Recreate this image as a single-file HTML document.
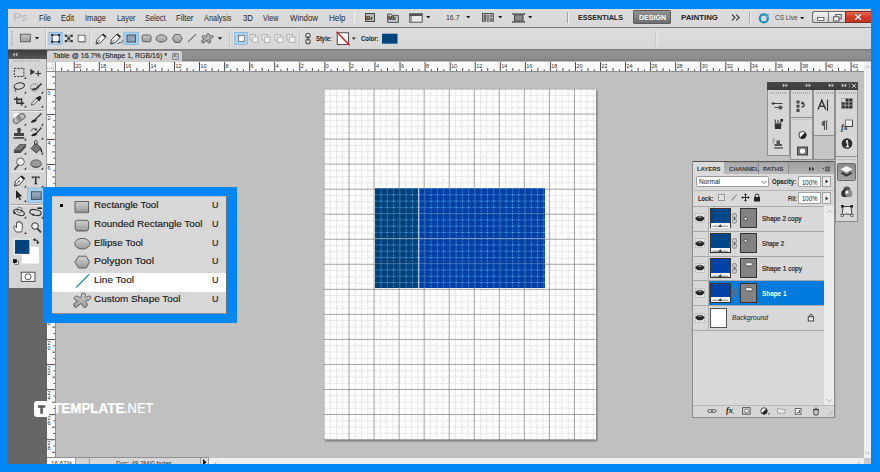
<!DOCTYPE html>
<html lang="en"><head><meta charset="utf-8"><title>Photoshop - Line Tool</title>
<style>
html,body{margin:0;padding:0;}
body{width:880px;height:472px;overflow:hidden;background:#0086f6;position:relative;font-family:"Liberation Sans",sans-serif;}
#app div{position:absolute;box-sizing:border-box;}
#app{position:absolute;left:0;top:0;width:880px;height:472px;overflow:hidden;}
.t{position:absolute;}
</style></head><body><div id="app">

<div style="left:8px;top:9px;width:863px;height:455px;background:#c0c0c0;"></div>
<div style="left:8px;top:9px;width:863px;height:19px;background:linear-gradient(#dcdcdc,#d8d8d8);"></div>
<div style="left:8px;top:26.8px;width:863px;height:1px;background:#7c7c7c;"></div>
<div class="t" style="left:12.5px;top:10.91px;font-size:11.5px;line-height:13.22px;color:#b4b4b4;white-space:nowrap;transform:scaleX(1.0804);transform-origin:0 0;">Ps</div>
<div class="t" style="left:38.5px;top:12.59px;font-size:8.8px;line-height:10.12px;color:#262626;white-space:nowrap;transform:scaleX(0.8463);transform-origin:0 0;">File</div>
<div class="t" style="left:61px;top:12.59px;font-size:8.8px;line-height:10.12px;color:#262626;white-space:nowrap;transform:scaleX(0.8573);transform-origin:0 0;">Edit</div>
<div class="t" style="left:84.5px;top:12.59px;font-size:8.8px;line-height:10.12px;color:#262626;white-space:nowrap;transform:scaleX(0.8587);transform-origin:0 0;">Image</div>
<div class="t" style="left:116.5px;top:12.59px;font-size:8.8px;line-height:10.12px;color:#262626;white-space:nowrap;transform:scaleX(0.8405);transform-origin:0 0;">Layer</div>
<div class="t" style="left:145px;top:12.59px;font-size:8.8px;line-height:10.12px;color:#262626;white-space:nowrap;transform:scaleX(0.8382);transform-origin:0 0;">Select</div>
<div class="t" style="left:176px;top:12.59px;font-size:8.8px;line-height:10.12px;color:#262626;white-space:nowrap;transform:scaleX(0.8950);transform-origin:0 0;">Filter</div>
<div class="t" style="left:204px;top:12.59px;font-size:8.8px;line-height:10.12px;color:#262626;white-space:nowrap;transform:scaleX(0.8392);transform-origin:0 0;">Analysis</div>
<div class="t" style="left:242.5px;top:12.59px;font-size:8.8px;line-height:10.12px;color:#262626;white-space:nowrap;transform:scaleX(0.8890);transform-origin:0 0;">3D</div>
<div class="t" style="left:263px;top:12.59px;font-size:8.8px;line-height:10.12px;color:#262626;white-space:nowrap;transform:scaleX(0.8195);transform-origin:0 0;">View</div>
<div class="t" style="left:290px;top:12.59px;font-size:8.8px;line-height:10.12px;color:#262626;white-space:nowrap;transform:scaleX(0.8946);transform-origin:0 0;">Window</div>
<div class="t" style="left:329px;top:12.59px;font-size:8.8px;line-height:10.12px;color:#262626;white-space:nowrap;transform:scaleX(0.9117);transform-origin:0 0;">Help</div>
<div style="left:8px;top:28px;width:863px;height:21px;background:linear-gradient(#dddddd,#d6d6d6);"></div>
<div style="left:8px;top:48.5px;width:863px;height:1px;background:#8a8a8a;"></div>
<div style="left:8px;top:49.3px;width:863px;height:12.2px;background:linear-gradient(#787878 0,#929292 22%,#8c8c8c 82%,#7a7a7a 100%);"></div>
<div style="left:46.5px;top:50.5px;width:135.5px;height:11px;background:linear-gradient(#d6d6d6,#cdcdcd);border-radius:2px 2px 0 0;"></div>
<div class="t" style="left:52.5px;top:52.00px;font-size:7.6px;line-height:8.74px;color:#262626;white-space:nowrap;transform:scaleX(0.9233);transform-origin:0 0;-webkit-text-stroke:0.15px #262626;">Table @ 16.7% (Shape 1, RGB/16) *</div>
<div style="left:171.5px;top:52.5px;width:7.5px;height:7px;background:#c4c4c4;border:0.7px solid #888;border-radius:1px;"></div>
<div class="t" style="left:173px;top:52.15px;font-size:7px;line-height:8.05px;color:#555;white-space:nowrap;">×</div>
<div style="left:46.5px;top:61.5px;width:818px;height:9.5px;background:#fafafa;"></div>
<div style="left:46.5px;top:61.5px;width:8.7px;height:396px;background:#fafafa;"></div>
<div style="left:46.5px;top:70.5px;width:818px;height:0.8px;background:#8e8e8e;"></div>
<div style="left:54.9px;top:61.5px;width:0.8px;height:396px;background:#8e8e8e;"></div>
<svg style="position:absolute;left:46.5px;top:61.5px;" width="818" height="9.5" viewBox="0 0 818 9.5"><rect x="14.27" y="6.00" width="0.9" height="3.5" fill="#3a3a3a"/><rect x="20.54" y="7.30" width="0.9" height="2.2" fill="#3a3a3a"/><rect x="26.80" y="0.00" width="0.9" height="9.5" fill="#3a3a3a"/><text x="28.20" y="5.6" font-size="5.4" fill="#333" font-family="Liberation Sans, sans-serif">20</text><rect x="33.07" y="7.30" width="0.9" height="2.2" fill="#3a3a3a"/><rect x="39.33" y="6.00" width="0.9" height="3.5" fill="#3a3a3a"/><rect x="45.60" y="7.30" width="0.9" height="2.2" fill="#3a3a3a"/><rect x="51.86" y="0.00" width="0.9" height="9.5" fill="#3a3a3a"/><text x="53.26" y="5.6" font-size="5.4" fill="#333" font-family="Liberation Sans, sans-serif">18</text><rect x="58.13" y="7.30" width="0.9" height="2.2" fill="#3a3a3a"/><rect x="64.39" y="6.00" width="0.9" height="3.5" fill="#3a3a3a"/><rect x="70.66" y="7.30" width="0.9" height="2.2" fill="#3a3a3a"/><rect x="76.92" y="0.00" width="0.9" height="9.5" fill="#3a3a3a"/><text x="78.32" y="5.6" font-size="5.4" fill="#333" font-family="Liberation Sans, sans-serif">16</text><rect x="83.19" y="7.30" width="0.9" height="2.2" fill="#3a3a3a"/><rect x="89.45" y="6.00" width="0.9" height="3.5" fill="#3a3a3a"/><rect x="95.72" y="7.30" width="0.9" height="2.2" fill="#3a3a3a"/><rect x="101.98" y="0.00" width="0.9" height="9.5" fill="#3a3a3a"/><text x="103.38" y="5.6" font-size="5.4" fill="#333" font-family="Liberation Sans, sans-serif">14</text><rect x="108.25" y="7.30" width="0.9" height="2.2" fill="#3a3a3a"/><rect x="114.51" y="6.00" width="0.9" height="3.5" fill="#3a3a3a"/><rect x="120.78" y="7.30" width="0.9" height="2.2" fill="#3a3a3a"/><rect x="127.04" y="0.00" width="0.9" height="9.5" fill="#3a3a3a"/><text x="128.44" y="5.6" font-size="5.4" fill="#333" font-family="Liberation Sans, sans-serif">12</text><rect x="133.31" y="7.30" width="0.9" height="2.2" fill="#3a3a3a"/><rect x="139.57" y="6.00" width="0.9" height="3.5" fill="#3a3a3a"/><rect x="145.84" y="7.30" width="0.9" height="2.2" fill="#3a3a3a"/><rect x="152.10" y="0.00" width="0.9" height="9.5" fill="#3a3a3a"/><text x="153.50" y="5.6" font-size="5.4" fill="#333" font-family="Liberation Sans, sans-serif">10</text><rect x="158.37" y="7.30" width="0.9" height="2.2" fill="#3a3a3a"/><rect x="164.63" y="6.00" width="0.9" height="3.5" fill="#3a3a3a"/><rect x="170.90" y="7.30" width="0.9" height="2.2" fill="#3a3a3a"/><rect x="177.16" y="0.00" width="0.9" height="9.5" fill="#3a3a3a"/><text x="178.56" y="5.6" font-size="5.4" fill="#333" font-family="Liberation Sans, sans-serif">8</text><rect x="183.43" y="7.30" width="0.9" height="2.2" fill="#3a3a3a"/><rect x="189.69" y="6.00" width="0.9" height="3.5" fill="#3a3a3a"/><rect x="195.96" y="7.30" width="0.9" height="2.2" fill="#3a3a3a"/><rect x="202.22" y="0.00" width="0.9" height="9.5" fill="#3a3a3a"/><text x="203.62" y="5.6" font-size="5.4" fill="#333" font-family="Liberation Sans, sans-serif">6</text><rect x="208.49" y="7.30" width="0.9" height="2.2" fill="#3a3a3a"/><rect x="214.75" y="6.00" width="0.9" height="3.5" fill="#3a3a3a"/><rect x="221.02" y="7.30" width="0.9" height="2.2" fill="#3a3a3a"/><rect x="227.28" y="0.00" width="0.9" height="9.5" fill="#3a3a3a"/><text x="228.68" y="5.6" font-size="5.4" fill="#333" font-family="Liberation Sans, sans-serif">4</text><rect x="233.54" y="7.30" width="0.9" height="2.2" fill="#3a3a3a"/><rect x="239.81" y="6.00" width="0.9" height="3.5" fill="#3a3a3a"/><rect x="246.08" y="7.30" width="0.9" height="2.2" fill="#3a3a3a"/><rect x="252.34" y="0.00" width="0.9" height="9.5" fill="#3a3a3a"/><text x="253.74" y="5.6" font-size="5.4" fill="#333" font-family="Liberation Sans, sans-serif">2</text><rect x="258.61" y="7.30" width="0.9" height="2.2" fill="#3a3a3a"/><rect x="264.87" y="6.00" width="0.9" height="3.5" fill="#3a3a3a"/><rect x="271.14" y="7.30" width="0.9" height="2.2" fill="#3a3a3a"/><rect x="277.40" y="0.00" width="0.9" height="9.5" fill="#3a3a3a"/><text x="278.80" y="5.6" font-size="5.4" fill="#333" font-family="Liberation Sans, sans-serif">0</text><rect x="283.67" y="7.30" width="0.9" height="2.2" fill="#3a3a3a"/><rect x="289.93" y="6.00" width="0.9" height="3.5" fill="#3a3a3a"/><rect x="296.20" y="7.30" width="0.9" height="2.2" fill="#3a3a3a"/><rect x="302.46" y="0.00" width="0.9" height="9.5" fill="#3a3a3a"/><text x="303.86" y="5.6" font-size="5.4" fill="#333" font-family="Liberation Sans, sans-serif">2</text><rect x="308.73" y="7.30" width="0.9" height="2.2" fill="#3a3a3a"/><rect x="314.99" y="6.00" width="0.9" height="3.5" fill="#3a3a3a"/><rect x="321.26" y="7.30" width="0.9" height="2.2" fill="#3a3a3a"/><rect x="327.52" y="0.00" width="0.9" height="9.5" fill="#3a3a3a"/><text x="328.92" y="5.6" font-size="5.4" fill="#333" font-family="Liberation Sans, sans-serif">4</text><rect x="333.79" y="7.30" width="0.9" height="2.2" fill="#3a3a3a"/><rect x="340.05" y="6.00" width="0.9" height="3.5" fill="#3a3a3a"/><rect x="346.32" y="7.30" width="0.9" height="2.2" fill="#3a3a3a"/><rect x="352.58" y="0.00" width="0.9" height="9.5" fill="#3a3a3a"/><text x="353.98" y="5.6" font-size="5.4" fill="#333" font-family="Liberation Sans, sans-serif">6</text><rect x="358.85" y="7.30" width="0.9" height="2.2" fill="#3a3a3a"/><rect x="365.11" y="6.00" width="0.9" height="3.5" fill="#3a3a3a"/><rect x="371.38" y="7.30" width="0.9" height="2.2" fill="#3a3a3a"/><rect x="377.64" y="0.00" width="0.9" height="9.5" fill="#3a3a3a"/><text x="379.04" y="5.6" font-size="5.4" fill="#333" font-family="Liberation Sans, sans-serif">8</text><rect x="383.91" y="7.30" width="0.9" height="2.2" fill="#3a3a3a"/><rect x="390.17" y="6.00" width="0.9" height="3.5" fill="#3a3a3a"/><rect x="396.44" y="7.30" width="0.9" height="2.2" fill="#3a3a3a"/><rect x="402.70" y="0.00" width="0.9" height="9.5" fill="#3a3a3a"/><text x="404.10" y="5.6" font-size="5.4" fill="#333" font-family="Liberation Sans, sans-serif">10</text><rect x="408.97" y="7.30" width="0.9" height="2.2" fill="#3a3a3a"/><rect x="415.23" y="6.00" width="0.9" height="3.5" fill="#3a3a3a"/><rect x="421.50" y="7.30" width="0.9" height="2.2" fill="#3a3a3a"/><rect x="427.76" y="0.00" width="0.9" height="9.5" fill="#3a3a3a"/><text x="429.16" y="5.6" font-size="5.4" fill="#333" font-family="Liberation Sans, sans-serif">12</text><rect x="434.03" y="7.30" width="0.9" height="2.2" fill="#3a3a3a"/><rect x="440.29" y="6.00" width="0.9" height="3.5" fill="#3a3a3a"/><rect x="446.56" y="7.30" width="0.9" height="2.2" fill="#3a3a3a"/><rect x="452.82" y="0.00" width="0.9" height="9.5" fill="#3a3a3a"/><text x="454.22" y="5.6" font-size="5.4" fill="#333" font-family="Liberation Sans, sans-serif">14</text><rect x="459.09" y="7.30" width="0.9" height="2.2" fill="#3a3a3a"/><rect x="465.35" y="6.00" width="0.9" height="3.5" fill="#3a3a3a"/><rect x="471.62" y="7.30" width="0.9" height="2.2" fill="#3a3a3a"/><rect x="477.88" y="0.00" width="0.9" height="9.5" fill="#3a3a3a"/><text x="479.28" y="5.6" font-size="5.4" fill="#333" font-family="Liberation Sans, sans-serif">16</text><rect x="484.14" y="7.30" width="0.9" height="2.2" fill="#3a3a3a"/><rect x="490.41" y="6.00" width="0.9" height="3.5" fill="#3a3a3a"/><rect x="496.68" y="7.30" width="0.9" height="2.2" fill="#3a3a3a"/><rect x="502.94" y="0.00" width="0.9" height="9.5" fill="#3a3a3a"/><text x="504.34" y="5.6" font-size="5.4" fill="#333" font-family="Liberation Sans, sans-serif">18</text><rect x="509.21" y="7.30" width="0.9" height="2.2" fill="#3a3a3a"/><rect x="515.47" y="6.00" width="0.9" height="3.5" fill="#3a3a3a"/><rect x="521.74" y="7.30" width="0.9" height="2.2" fill="#3a3a3a"/><rect x="528.00" y="0.00" width="0.9" height="9.5" fill="#3a3a3a"/><text x="529.40" y="5.6" font-size="5.4" fill="#333" font-family="Liberation Sans, sans-serif">20</text><rect x="534.26" y="7.30" width="0.9" height="2.2" fill="#3a3a3a"/><rect x="540.53" y="6.00" width="0.9" height="3.5" fill="#3a3a3a"/><rect x="546.79" y="7.30" width="0.9" height="2.2" fill="#3a3a3a"/><rect x="553.06" y="0.00" width="0.9" height="9.5" fill="#3a3a3a"/><text x="554.46" y="5.6" font-size="5.4" fill="#333" font-family="Liberation Sans, sans-serif">22</text><rect x="559.33" y="7.30" width="0.9" height="2.2" fill="#3a3a3a"/><rect x="565.59" y="6.00" width="0.9" height="3.5" fill="#3a3a3a"/><rect x="571.86" y="7.30" width="0.9" height="2.2" fill="#3a3a3a"/><rect x="578.12" y="0.00" width="0.9" height="9.5" fill="#3a3a3a"/><text x="579.52" y="5.6" font-size="5.4" fill="#333" font-family="Liberation Sans, sans-serif">24</text><rect x="584.38" y="7.30" width="0.9" height="2.2" fill="#3a3a3a"/><rect x="590.65" y="6.00" width="0.9" height="3.5" fill="#3a3a3a"/><rect x="596.92" y="7.30" width="0.9" height="2.2" fill="#3a3a3a"/><rect x="603.18" y="0.00" width="0.9" height="9.5" fill="#3a3a3a"/><text x="604.58" y="5.6" font-size="5.4" fill="#333" font-family="Liberation Sans, sans-serif">26</text><rect x="609.45" y="7.30" width="0.9" height="2.2" fill="#3a3a3a"/><rect x="615.71" y="6.00" width="0.9" height="3.5" fill="#3a3a3a"/><rect x="621.98" y="7.30" width="0.9" height="2.2" fill="#3a3a3a"/><rect x="628.24" y="0.00" width="0.9" height="9.5" fill="#3a3a3a"/><text x="629.64" y="5.6" font-size="5.4" fill="#333" font-family="Liberation Sans, sans-serif">28</text><rect x="634.50" y="7.30" width="0.9" height="2.2" fill="#3a3a3a"/><rect x="640.77" y="6.00" width="0.9" height="3.5" fill="#3a3a3a"/><rect x="647.03" y="7.30" width="0.9" height="2.2" fill="#3a3a3a"/><rect x="653.30" y="0.00" width="0.9" height="9.5" fill="#3a3a3a"/><text x="654.70" y="5.6" font-size="5.4" fill="#333" font-family="Liberation Sans, sans-serif">30</text><rect x="659.56" y="7.30" width="0.9" height="2.2" fill="#3a3a3a"/><rect x="665.83" y="6.00" width="0.9" height="3.5" fill="#3a3a3a"/><rect x="672.10" y="7.30" width="0.9" height="2.2" fill="#3a3a3a"/><rect x="678.36" y="0.00" width="0.9" height="9.5" fill="#3a3a3a"/><text x="679.76" y="5.6" font-size="5.4" fill="#333" font-family="Liberation Sans, sans-serif">32</text><rect x="684.62" y="7.30" width="0.9" height="2.2" fill="#3a3a3a"/><rect x="690.89" y="6.00" width="0.9" height="3.5" fill="#3a3a3a"/><rect x="697.16" y="7.30" width="0.9" height="2.2" fill="#3a3a3a"/><rect x="703.42" y="0.00" width="0.9" height="9.5" fill="#3a3a3a"/><text x="704.82" y="5.6" font-size="5.4" fill="#333" font-family="Liberation Sans, sans-serif">34</text><rect x="709.69" y="7.30" width="0.9" height="2.2" fill="#3a3a3a"/><rect x="715.95" y="6.00" width="0.9" height="3.5" fill="#3a3a3a"/><rect x="722.22" y="7.30" width="0.9" height="2.2" fill="#3a3a3a"/><rect x="728.48" y="0.00" width="0.9" height="9.5" fill="#3a3a3a"/><text x="729.88" y="5.6" font-size="5.4" fill="#333" font-family="Liberation Sans, sans-serif">36</text><rect x="734.75" y="7.30" width="0.9" height="2.2" fill="#3a3a3a"/><rect x="741.01" y="6.00" width="0.9" height="3.5" fill="#3a3a3a"/><rect x="747.27" y="7.30" width="0.9" height="2.2" fill="#3a3a3a"/><rect x="753.54" y="0.00" width="0.9" height="9.5" fill="#3a3a3a"/><text x="754.94" y="5.6" font-size="5.4" fill="#333" font-family="Liberation Sans, sans-serif">38</text><rect x="759.80" y="7.30" width="0.9" height="2.2" fill="#3a3a3a"/><rect x="766.07" y="6.00" width="0.9" height="3.5" fill="#3a3a3a"/><rect x="772.34" y="7.30" width="0.9" height="2.2" fill="#3a3a3a"/><rect x="778.60" y="0.00" width="0.9" height="9.5" fill="#3a3a3a"/><text x="780.00" y="5.6" font-size="5.4" fill="#333" font-family="Liberation Sans, sans-serif">40</text><rect x="784.87" y="7.30" width="0.9" height="2.2" fill="#3a3a3a"/><rect x="791.13" y="6.00" width="0.9" height="3.5" fill="#3a3a3a"/><rect x="797.40" y="7.30" width="0.9" height="2.2" fill="#3a3a3a"/><rect x="803.66" y="0.00" width="0.9" height="9.5" fill="#3a3a3a"/><text x="805.06" y="5.6" font-size="5.4" fill="#333" font-family="Liberation Sans, sans-serif">42</text><rect x="809.93" y="7.30" width="0.9" height="2.2" fill="#3a3a3a"/></svg>
<svg style="position:absolute;left:46.5px;top:61.5px;" width="8.7" height="396" viewBox="0 0 8.7 396"><rect x="5.20" y="14.17" width="3.5" height="0.9" fill="#3a3a3a"/><rect x="6.50" y="20.43" width="2.2" height="0.9" fill="#3a3a3a"/><rect x="0.00" y="26.70" width="8.7" height="0.9" fill="#3a3a3a"/><text x="0.6" y="32.70" font-size="5.4" fill="#333" font-family="Liberation Sans, sans-serif">0</text><rect x="6.50" y="32.96" width="2.2" height="0.9" fill="#3a3a3a"/><rect x="5.20" y="39.23" width="3.5" height="0.9" fill="#3a3a3a"/><rect x="6.50" y="45.49" width="2.2" height="0.9" fill="#3a3a3a"/><rect x="0.00" y="51.76" width="8.7" height="0.9" fill="#3a3a3a"/><text x="0.6" y="57.76" font-size="5.4" fill="#333" font-family="Liberation Sans, sans-serif">2</text><rect x="6.50" y="58.02" width="2.2" height="0.9" fill="#3a3a3a"/><rect x="5.20" y="64.29" width="3.5" height="0.9" fill="#3a3a3a"/><rect x="6.50" y="70.55" width="2.2" height="0.9" fill="#3a3a3a"/><rect x="0.00" y="76.82" width="8.7" height="0.9" fill="#3a3a3a"/><text x="0.6" y="82.82" font-size="5.4" fill="#333" font-family="Liberation Sans, sans-serif">4</text><rect x="6.50" y="83.08" width="2.2" height="0.9" fill="#3a3a3a"/><rect x="5.20" y="89.35" width="3.5" height="0.9" fill="#3a3a3a"/><rect x="6.50" y="95.61" width="2.2" height="0.9" fill="#3a3a3a"/><rect x="0.00" y="101.88" width="8.7" height="0.9" fill="#3a3a3a"/><text x="0.6" y="107.88" font-size="5.4" fill="#333" font-family="Liberation Sans, sans-serif">6</text><rect x="6.50" y="108.14" width="2.2" height="0.9" fill="#3a3a3a"/><rect x="5.20" y="114.41" width="3.5" height="0.9" fill="#3a3a3a"/><rect x="6.50" y="120.67" width="2.2" height="0.9" fill="#3a3a3a"/><rect x="0.00" y="126.94" width="8.7" height="0.9" fill="#3a3a3a"/><text x="0.6" y="132.94" font-size="5.4" fill="#333" font-family="Liberation Sans, sans-serif">8</text><rect x="6.50" y="133.20" width="2.2" height="0.9" fill="#3a3a3a"/><rect x="5.20" y="139.47" width="3.5" height="0.9" fill="#3a3a3a"/><rect x="6.50" y="145.73" width="2.2" height="0.9" fill="#3a3a3a"/><rect x="0.00" y="152.00" width="8.7" height="0.9" fill="#3a3a3a"/><text x="0.6" y="158.00" font-size="5.4" fill="#333" font-family="Liberation Sans, sans-serif">1</text><text x="0.6" y="162.60" font-size="5.4" fill="#333" font-family="Liberation Sans, sans-serif">0</text><rect x="6.50" y="158.26" width="2.2" height="0.9" fill="#3a3a3a"/><rect x="5.20" y="164.53" width="3.5" height="0.9" fill="#3a3a3a"/><rect x="6.50" y="170.79" width="2.2" height="0.9" fill="#3a3a3a"/><rect x="0.00" y="177.06" width="8.7" height="0.9" fill="#3a3a3a"/><text x="0.6" y="183.06" font-size="5.4" fill="#333" font-family="Liberation Sans, sans-serif">1</text><text x="0.6" y="187.66" font-size="5.4" fill="#333" font-family="Liberation Sans, sans-serif">2</text><rect x="6.50" y="183.32" width="2.2" height="0.9" fill="#3a3a3a"/><rect x="5.20" y="189.59" width="3.5" height="0.9" fill="#3a3a3a"/><rect x="6.50" y="195.85" width="2.2" height="0.9" fill="#3a3a3a"/><rect x="0.00" y="202.12" width="8.7" height="0.9" fill="#3a3a3a"/><text x="0.6" y="208.12" font-size="5.4" fill="#333" font-family="Liberation Sans, sans-serif">1</text><text x="0.6" y="212.72" font-size="5.4" fill="#333" font-family="Liberation Sans, sans-serif">4</text><rect x="6.50" y="208.38" width="2.2" height="0.9" fill="#3a3a3a"/><rect x="5.20" y="214.65" width="3.5" height="0.9" fill="#3a3a3a"/><rect x="6.50" y="220.91" width="2.2" height="0.9" fill="#3a3a3a"/><rect x="0.00" y="227.18" width="8.7" height="0.9" fill="#3a3a3a"/><text x="0.6" y="233.18" font-size="5.4" fill="#333" font-family="Liberation Sans, sans-serif">1</text><text x="0.6" y="237.78" font-size="5.4" fill="#333" font-family="Liberation Sans, sans-serif">6</text><rect x="6.50" y="233.44" width="2.2" height="0.9" fill="#3a3a3a"/><rect x="5.20" y="239.71" width="3.5" height="0.9" fill="#3a3a3a"/><rect x="6.50" y="245.97" width="2.2" height="0.9" fill="#3a3a3a"/><rect x="0.00" y="252.24" width="8.7" height="0.9" fill="#3a3a3a"/><text x="0.6" y="258.24" font-size="5.4" fill="#333" font-family="Liberation Sans, sans-serif">1</text><text x="0.6" y="262.84" font-size="5.4" fill="#333" font-family="Liberation Sans, sans-serif">8</text><rect x="6.50" y="258.50" width="2.2" height="0.9" fill="#3a3a3a"/><rect x="5.20" y="264.77" width="3.5" height="0.9" fill="#3a3a3a"/><rect x="6.50" y="271.03" width="2.2" height="0.9" fill="#3a3a3a"/><rect x="0.00" y="277.30" width="8.7" height="0.9" fill="#3a3a3a"/><text x="0.6" y="283.30" font-size="5.4" fill="#333" font-family="Liberation Sans, sans-serif">2</text><text x="0.6" y="287.90" font-size="5.4" fill="#333" font-family="Liberation Sans, sans-serif">0</text><rect x="6.50" y="283.57" width="2.2" height="0.9" fill="#3a3a3a"/><rect x="5.20" y="289.83" width="3.5" height="0.9" fill="#3a3a3a"/><rect x="6.50" y="296.10" width="2.2" height="0.9" fill="#3a3a3a"/><rect x="0.00" y="302.36" width="8.7" height="0.9" fill="#3a3a3a"/><text x="0.6" y="308.36" font-size="5.4" fill="#333" font-family="Liberation Sans, sans-serif">2</text><text x="0.6" y="312.96" font-size="5.4" fill="#333" font-family="Liberation Sans, sans-serif">2</text><rect x="6.50" y="308.62" width="2.2" height="0.9" fill="#3a3a3a"/><rect x="5.20" y="314.89" width="3.5" height="0.9" fill="#3a3a3a"/><rect x="6.50" y="321.15" width="2.2" height="0.9" fill="#3a3a3a"/><rect x="0.00" y="327.42" width="8.7" height="0.9" fill="#3a3a3a"/><text x="0.6" y="333.42" font-size="5.4" fill="#333" font-family="Liberation Sans, sans-serif">2</text><text x="0.6" y="338.02" font-size="5.4" fill="#333" font-family="Liberation Sans, sans-serif">4</text><rect x="6.50" y="333.68" width="2.2" height="0.9" fill="#3a3a3a"/><rect x="5.20" y="339.95" width="3.5" height="0.9" fill="#3a3a3a"/><rect x="6.50" y="346.22" width="2.2" height="0.9" fill="#3a3a3a"/><rect x="0.00" y="352.48" width="8.7" height="0.9" fill="#3a3a3a"/><text x="0.6" y="358.48" font-size="5.4" fill="#333" font-family="Liberation Sans, sans-serif">2</text><text x="0.6" y="363.08" font-size="5.4" fill="#333" font-family="Liberation Sans, sans-serif">6</text><rect x="6.50" y="358.75" width="2.2" height="0.9" fill="#3a3a3a"/><rect x="5.20" y="365.01" width="3.5" height="0.9" fill="#3a3a3a"/><rect x="6.50" y="371.27" width="2.2" height="0.9" fill="#3a3a3a"/><rect x="0.00" y="377.54" width="8.7" height="0.9" fill="#3a3a3a"/><text x="0.6" y="383.54" font-size="5.4" fill="#333" font-family="Liberation Sans, sans-serif">2</text><text x="0.6" y="388.14" font-size="5.4" fill="#333" font-family="Liberation Sans, sans-serif">8</text><rect x="6.50" y="383.80" width="2.2" height="0.9" fill="#3a3a3a"/><rect x="5.20" y="390.07" width="3.5" height="0.9" fill="#3a3a3a"/></svg>
<div style="left:46.5px;top:61.5px;width:8.7px;height:9.3px;background:#f4f4f4;"></div>
<svg style="position:absolute;left:46.5px;top:61.5px;" width="8.7" height="9.3" viewBox="0 0 8.7 9.3"><path d="M6 0V9.3M0 6.3H8.7" stroke="#888" stroke-width="0.6" stroke-dasharray="1 1" fill="none"/></svg>
<div style="left:324.3px;top:88.6px;width:271.49999999999994px;height:351.0px;background:#ffffff;box-shadow:1px 1px 2px rgba(0,0,0,0.45);"></div>
<svg style="position:absolute;left:324.3px;top:88.6px;" width="271.5" height="351.0" viewBox="0 0 271.5 351.0"><path d="M6.26 0V351.00M12.52 0V351.00M18.78 0V351.00M31.30 0V351.00M37.56 0V351.00M43.82 0V351.00M56.34 0V351.00M62.60 0V351.00M68.86 0V351.00M81.38 0V351.00M87.64 0V351.00M93.90 0V351.00M106.42 0V351.00M112.68 0V351.00M118.94 0V351.00M131.46 0V351.00M137.72 0V351.00M143.98 0V351.00M156.50 0V351.00M162.76 0V351.00M169.02 0V351.00M181.54 0V351.00M187.80 0V351.00M194.06 0V351.00M206.58 0V351.00M212.84 0V351.00M219.10 0V351.00M231.62 0V351.00M237.88 0V351.00M244.14 0V351.00M256.66 0V351.00M262.92 0V351.00M269.18 0V351.00M0 6.26H271.50M0 12.52H271.50M0 18.78H271.50M0 31.30H271.50M0 37.56H271.50M0 43.82H271.50M0 56.34H271.50M0 62.60H271.50M0 68.86H271.50M0 81.38H271.50M0 87.64H271.50M0 93.90H271.50M0 106.42H271.50M0 112.68H271.50M0 118.94H271.50M0 131.46H271.50M0 137.72H271.50M0 143.98H271.50M0 156.50H271.50M0 162.76H271.50M0 169.02H271.50M0 181.54H271.50M0 187.80H271.50M0 194.06H271.50M0 206.58H271.50M0 212.84H271.50M0 219.10H271.50M0 231.62H271.50M0 237.88H271.50M0 244.14H271.50M0 256.66H271.50M0 262.92H271.50M0 269.18H271.50M0 281.70H271.50M0 287.96H271.50M0 294.22H271.50M0 306.74H271.50M0 313.00H271.50M0 319.26H271.50M0 331.78H271.50M0 338.04H271.50M0 344.30H271.50" stroke="#a8a8a8" stroke-opacity="0.42" stroke-width="0.8" stroke-dasharray="2.3 0.83" fill="none"/><path d="M0.00 0V351.00M25.04 0V351.00M50.08 0V351.00M75.12 0V351.00M100.16 0V351.00M125.20 0V351.00M150.24 0V351.00M175.28 0V351.00M200.32 0V351.00M225.36 0V351.00M250.40 0V351.00M0 0.00H271.50M0 25.04H271.50M0 50.08H271.50M0 75.12H271.50M0 100.16H271.50M0 125.20H271.50M0 150.24H271.50M0 175.28H271.50M0 200.32H271.50M0 225.36H271.50M0 250.40H271.50M0 275.44H271.50M0 300.48H271.50M0 325.52H271.50M0 350.56H271.50" stroke="#767676" stroke-opacity="0.8" stroke-width="0.85" fill="none"/></svg>
<div style="left:374.6px;top:188.2px;width:43.89999999999998px;height:100.19999999999999px;background:#004179;"></div>
<div style="left:418.5px;top:188.2px;width:126.10000000000002px;height:100.19999999999999px;background:#003fa6;"></div>
<svg style="position:absolute;left:374.6px;top:188.2px;" width="170.0" height="100.2" viewBox="0 0 170.0 100.2"><path d="M6.04 0V100.20M12.30 0V100.20M18.56 0V100.20M31.08 0V100.20M37.34 0V100.20M43.60 0V100.20M56.12 0V100.20M62.38 0V100.20M68.64 0V100.20M81.16 0V100.20M87.42 0V100.20M93.68 0V100.20M106.20 0V100.20M112.46 0V100.20M118.72 0V100.20M131.24 0V100.20M137.50 0V100.20M143.76 0V100.20M156.28 0V100.20M162.54 0V100.20M168.80 0V100.20M0 6.82H170.00M0 13.08H170.00M0 19.34H170.00M0 31.86H170.00M0 38.12H170.00M0 44.38H170.00M0 56.90H170.00M0 63.16H170.00M0 69.42H170.00M0 81.94H170.00M0 88.20H170.00M0 94.46H170.00" stroke="#3f9be6" stroke-opacity="0.72" stroke-width="0.9" stroke-dasharray="2.3 0.83" fill="none"/><path d="M24.82 0V100.20M49.86 0V100.20M74.90 0V100.20M99.94 0V100.20M124.98 0V100.20M150.02 0V100.20M0 0.56H170.00M0 25.60H170.00M0 50.64H170.00M0 75.68H170.00" stroke="#8aa3bd" stroke-opacity="0.62" stroke-width="0.8" fill="none"/><g fill="#cfe4f6" fill-opacity="0.38"><rect x="5.44" y="6.22" width="1.2" height="1.2"/><rect x="5.44" y="12.48" width="1.2" height="1.2"/><rect x="5.44" y="18.74" width="1.2" height="1.2"/><rect x="5.44" y="31.26" width="1.2" height="1.2"/><rect x="5.44" y="37.52" width="1.2" height="1.2"/><rect x="5.44" y="43.78" width="1.2" height="1.2"/><rect x="5.44" y="56.30" width="1.2" height="1.2"/><rect x="5.44" y="62.56" width="1.2" height="1.2"/><rect x="5.44" y="68.82" width="1.2" height="1.2"/><rect x="5.44" y="81.34" width="1.2" height="1.2"/><rect x="5.44" y="87.60" width="1.2" height="1.2"/><rect x="5.44" y="93.86" width="1.2" height="1.2"/><rect x="11.70" y="6.22" width="1.2" height="1.2"/><rect x="11.70" y="12.48" width="1.2" height="1.2"/><rect x="11.70" y="18.74" width="1.2" height="1.2"/><rect x="11.70" y="31.26" width="1.2" height="1.2"/><rect x="11.70" y="37.52" width="1.2" height="1.2"/><rect x="11.70" y="43.78" width="1.2" height="1.2"/><rect x="11.70" y="56.30" width="1.2" height="1.2"/><rect x="11.70" y="62.56" width="1.2" height="1.2"/><rect x="11.70" y="68.82" width="1.2" height="1.2"/><rect x="11.70" y="81.34" width="1.2" height="1.2"/><rect x="11.70" y="87.60" width="1.2" height="1.2"/><rect x="11.70" y="93.86" width="1.2" height="1.2"/><rect x="17.96" y="6.22" width="1.2" height="1.2"/><rect x="17.96" y="12.48" width="1.2" height="1.2"/><rect x="17.96" y="18.74" width="1.2" height="1.2"/><rect x="17.96" y="31.26" width="1.2" height="1.2"/><rect x="17.96" y="37.52" width="1.2" height="1.2"/><rect x="17.96" y="43.78" width="1.2" height="1.2"/><rect x="17.96" y="56.30" width="1.2" height="1.2"/><rect x="17.96" y="62.56" width="1.2" height="1.2"/><rect x="17.96" y="68.82" width="1.2" height="1.2"/><rect x="17.96" y="81.34" width="1.2" height="1.2"/><rect x="17.96" y="87.60" width="1.2" height="1.2"/><rect x="17.96" y="93.86" width="1.2" height="1.2"/><rect x="30.48" y="6.22" width="1.2" height="1.2"/><rect x="30.48" y="12.48" width="1.2" height="1.2"/><rect x="30.48" y="18.74" width="1.2" height="1.2"/><rect x="30.48" y="31.26" width="1.2" height="1.2"/><rect x="30.48" y="37.52" width="1.2" height="1.2"/><rect x="30.48" y="43.78" width="1.2" height="1.2"/><rect x="30.48" y="56.30" width="1.2" height="1.2"/><rect x="30.48" y="62.56" width="1.2" height="1.2"/><rect x="30.48" y="68.82" width="1.2" height="1.2"/><rect x="30.48" y="81.34" width="1.2" height="1.2"/><rect x="30.48" y="87.60" width="1.2" height="1.2"/><rect x="30.48" y="93.86" width="1.2" height="1.2"/><rect x="36.74" y="6.22" width="1.2" height="1.2"/><rect x="36.74" y="12.48" width="1.2" height="1.2"/><rect x="36.74" y="18.74" width="1.2" height="1.2"/><rect x="36.74" y="31.26" width="1.2" height="1.2"/><rect x="36.74" y="37.52" width="1.2" height="1.2"/><rect x="36.74" y="43.78" width="1.2" height="1.2"/><rect x="36.74" y="56.30" width="1.2" height="1.2"/><rect x="36.74" y="62.56" width="1.2" height="1.2"/><rect x="36.74" y="68.82" width="1.2" height="1.2"/><rect x="36.74" y="81.34" width="1.2" height="1.2"/><rect x="36.74" y="87.60" width="1.2" height="1.2"/><rect x="36.74" y="93.86" width="1.2" height="1.2"/><rect x="43.00" y="6.22" width="1.2" height="1.2"/><rect x="43.00" y="12.48" width="1.2" height="1.2"/><rect x="43.00" y="18.74" width="1.2" height="1.2"/><rect x="43.00" y="31.26" width="1.2" height="1.2"/><rect x="43.00" y="37.52" width="1.2" height="1.2"/><rect x="43.00" y="43.78" width="1.2" height="1.2"/><rect x="43.00" y="56.30" width="1.2" height="1.2"/><rect x="43.00" y="62.56" width="1.2" height="1.2"/><rect x="43.00" y="68.82" width="1.2" height="1.2"/><rect x="43.00" y="81.34" width="1.2" height="1.2"/><rect x="43.00" y="87.60" width="1.2" height="1.2"/><rect x="43.00" y="93.86" width="1.2" height="1.2"/><rect x="55.52" y="6.22" width="1.2" height="1.2"/><rect x="55.52" y="12.48" width="1.2" height="1.2"/><rect x="55.52" y="18.74" width="1.2" height="1.2"/><rect x="55.52" y="31.26" width="1.2" height="1.2"/><rect x="55.52" y="37.52" width="1.2" height="1.2"/><rect x="55.52" y="43.78" width="1.2" height="1.2"/><rect x="55.52" y="56.30" width="1.2" height="1.2"/><rect x="55.52" y="62.56" width="1.2" height="1.2"/><rect x="55.52" y="68.82" width="1.2" height="1.2"/><rect x="55.52" y="81.34" width="1.2" height="1.2"/><rect x="55.52" y="87.60" width="1.2" height="1.2"/><rect x="55.52" y="93.86" width="1.2" height="1.2"/><rect x="61.78" y="6.22" width="1.2" height="1.2"/><rect x="61.78" y="12.48" width="1.2" height="1.2"/><rect x="61.78" y="18.74" width="1.2" height="1.2"/><rect x="61.78" y="31.26" width="1.2" height="1.2"/><rect x="61.78" y="37.52" width="1.2" height="1.2"/><rect x="61.78" y="43.78" width="1.2" height="1.2"/><rect x="61.78" y="56.30" width="1.2" height="1.2"/><rect x="61.78" y="62.56" width="1.2" height="1.2"/><rect x="61.78" y="68.82" width="1.2" height="1.2"/><rect x="61.78" y="81.34" width="1.2" height="1.2"/><rect x="61.78" y="87.60" width="1.2" height="1.2"/><rect x="61.78" y="93.86" width="1.2" height="1.2"/><rect x="68.04" y="6.22" width="1.2" height="1.2"/><rect x="68.04" y="12.48" width="1.2" height="1.2"/><rect x="68.04" y="18.74" width="1.2" height="1.2"/><rect x="68.04" y="31.26" width="1.2" height="1.2"/><rect x="68.04" y="37.52" width="1.2" height="1.2"/><rect x="68.04" y="43.78" width="1.2" height="1.2"/><rect x="68.04" y="56.30" width="1.2" height="1.2"/><rect x="68.04" y="62.56" width="1.2" height="1.2"/><rect x="68.04" y="68.82" width="1.2" height="1.2"/><rect x="68.04" y="81.34" width="1.2" height="1.2"/><rect x="68.04" y="87.60" width="1.2" height="1.2"/><rect x="68.04" y="93.86" width="1.2" height="1.2"/><rect x="80.56" y="6.22" width="1.2" height="1.2"/><rect x="80.56" y="12.48" width="1.2" height="1.2"/><rect x="80.56" y="18.74" width="1.2" height="1.2"/><rect x="80.56" y="31.26" width="1.2" height="1.2"/><rect x="80.56" y="37.52" width="1.2" height="1.2"/><rect x="80.56" y="43.78" width="1.2" height="1.2"/><rect x="80.56" y="56.30" width="1.2" height="1.2"/><rect x="80.56" y="62.56" width="1.2" height="1.2"/><rect x="80.56" y="68.82" width="1.2" height="1.2"/><rect x="80.56" y="81.34" width="1.2" height="1.2"/><rect x="80.56" y="87.60" width="1.2" height="1.2"/><rect x="80.56" y="93.86" width="1.2" height="1.2"/><rect x="86.82" y="6.22" width="1.2" height="1.2"/><rect x="86.82" y="12.48" width="1.2" height="1.2"/><rect x="86.82" y="18.74" width="1.2" height="1.2"/><rect x="86.82" y="31.26" width="1.2" height="1.2"/><rect x="86.82" y="37.52" width="1.2" height="1.2"/><rect x="86.82" y="43.78" width="1.2" height="1.2"/><rect x="86.82" y="56.30" width="1.2" height="1.2"/><rect x="86.82" y="62.56" width="1.2" height="1.2"/><rect x="86.82" y="68.82" width="1.2" height="1.2"/><rect x="86.82" y="81.34" width="1.2" height="1.2"/><rect x="86.82" y="87.60" width="1.2" height="1.2"/><rect x="86.82" y="93.86" width="1.2" height="1.2"/><rect x="93.08" y="6.22" width="1.2" height="1.2"/><rect x="93.08" y="12.48" width="1.2" height="1.2"/><rect x="93.08" y="18.74" width="1.2" height="1.2"/><rect x="93.08" y="31.26" width="1.2" height="1.2"/><rect x="93.08" y="37.52" width="1.2" height="1.2"/><rect x="93.08" y="43.78" width="1.2" height="1.2"/><rect x="93.08" y="56.30" width="1.2" height="1.2"/><rect x="93.08" y="62.56" width="1.2" height="1.2"/><rect x="93.08" y="68.82" width="1.2" height="1.2"/><rect x="93.08" y="81.34" width="1.2" height="1.2"/><rect x="93.08" y="87.60" width="1.2" height="1.2"/><rect x="93.08" y="93.86" width="1.2" height="1.2"/><rect x="105.60" y="6.22" width="1.2" height="1.2"/><rect x="105.60" y="12.48" width="1.2" height="1.2"/><rect x="105.60" y="18.74" width="1.2" height="1.2"/><rect x="105.60" y="31.26" width="1.2" height="1.2"/><rect x="105.60" y="37.52" width="1.2" height="1.2"/><rect x="105.60" y="43.78" width="1.2" height="1.2"/><rect x="105.60" y="56.30" width="1.2" height="1.2"/><rect x="105.60" y="62.56" width="1.2" height="1.2"/><rect x="105.60" y="68.82" width="1.2" height="1.2"/><rect x="105.60" y="81.34" width="1.2" height="1.2"/><rect x="105.60" y="87.60" width="1.2" height="1.2"/><rect x="105.60" y="93.86" width="1.2" height="1.2"/><rect x="111.86" y="6.22" width="1.2" height="1.2"/><rect x="111.86" y="12.48" width="1.2" height="1.2"/><rect x="111.86" y="18.74" width="1.2" height="1.2"/><rect x="111.86" y="31.26" width="1.2" height="1.2"/><rect x="111.86" y="37.52" width="1.2" height="1.2"/><rect x="111.86" y="43.78" width="1.2" height="1.2"/><rect x="111.86" y="56.30" width="1.2" height="1.2"/><rect x="111.86" y="62.56" width="1.2" height="1.2"/><rect x="111.86" y="68.82" width="1.2" height="1.2"/><rect x="111.86" y="81.34" width="1.2" height="1.2"/><rect x="111.86" y="87.60" width="1.2" height="1.2"/><rect x="111.86" y="93.86" width="1.2" height="1.2"/><rect x="118.12" y="6.22" width="1.2" height="1.2"/><rect x="118.12" y="12.48" width="1.2" height="1.2"/><rect x="118.12" y="18.74" width="1.2" height="1.2"/><rect x="118.12" y="31.26" width="1.2" height="1.2"/><rect x="118.12" y="37.52" width="1.2" height="1.2"/><rect x="118.12" y="43.78" width="1.2" height="1.2"/><rect x="118.12" y="56.30" width="1.2" height="1.2"/><rect x="118.12" y="62.56" width="1.2" height="1.2"/><rect x="118.12" y="68.82" width="1.2" height="1.2"/><rect x="118.12" y="81.34" width="1.2" height="1.2"/><rect x="118.12" y="87.60" width="1.2" height="1.2"/><rect x="118.12" y="93.86" width="1.2" height="1.2"/><rect x="130.64" y="6.22" width="1.2" height="1.2"/><rect x="130.64" y="12.48" width="1.2" height="1.2"/><rect x="130.64" y="18.74" width="1.2" height="1.2"/><rect x="130.64" y="31.26" width="1.2" height="1.2"/><rect x="130.64" y="37.52" width="1.2" height="1.2"/><rect x="130.64" y="43.78" width="1.2" height="1.2"/><rect x="130.64" y="56.30" width="1.2" height="1.2"/><rect x="130.64" y="62.56" width="1.2" height="1.2"/><rect x="130.64" y="68.82" width="1.2" height="1.2"/><rect x="130.64" y="81.34" width="1.2" height="1.2"/><rect x="130.64" y="87.60" width="1.2" height="1.2"/><rect x="130.64" y="93.86" width="1.2" height="1.2"/><rect x="136.90" y="6.22" width="1.2" height="1.2"/><rect x="136.90" y="12.48" width="1.2" height="1.2"/><rect x="136.90" y="18.74" width="1.2" height="1.2"/><rect x="136.90" y="31.26" width="1.2" height="1.2"/><rect x="136.90" y="37.52" width="1.2" height="1.2"/><rect x="136.90" y="43.78" width="1.2" height="1.2"/><rect x="136.90" y="56.30" width="1.2" height="1.2"/><rect x="136.90" y="62.56" width="1.2" height="1.2"/><rect x="136.90" y="68.82" width="1.2" height="1.2"/><rect x="136.90" y="81.34" width="1.2" height="1.2"/><rect x="136.90" y="87.60" width="1.2" height="1.2"/><rect x="136.90" y="93.86" width="1.2" height="1.2"/><rect x="143.16" y="6.22" width="1.2" height="1.2"/><rect x="143.16" y="12.48" width="1.2" height="1.2"/><rect x="143.16" y="18.74" width="1.2" height="1.2"/><rect x="143.16" y="31.26" width="1.2" height="1.2"/><rect x="143.16" y="37.52" width="1.2" height="1.2"/><rect x="143.16" y="43.78" width="1.2" height="1.2"/><rect x="143.16" y="56.30" width="1.2" height="1.2"/><rect x="143.16" y="62.56" width="1.2" height="1.2"/><rect x="143.16" y="68.82" width="1.2" height="1.2"/><rect x="143.16" y="81.34" width="1.2" height="1.2"/><rect x="143.16" y="87.60" width="1.2" height="1.2"/><rect x="143.16" y="93.86" width="1.2" height="1.2"/><rect x="155.68" y="6.22" width="1.2" height="1.2"/><rect x="155.68" y="12.48" width="1.2" height="1.2"/><rect x="155.68" y="18.74" width="1.2" height="1.2"/><rect x="155.68" y="31.26" width="1.2" height="1.2"/><rect x="155.68" y="37.52" width="1.2" height="1.2"/><rect x="155.68" y="43.78" width="1.2" height="1.2"/><rect x="155.68" y="56.30" width="1.2" height="1.2"/><rect x="155.68" y="62.56" width="1.2" height="1.2"/><rect x="155.68" y="68.82" width="1.2" height="1.2"/><rect x="155.68" y="81.34" width="1.2" height="1.2"/><rect x="155.68" y="87.60" width="1.2" height="1.2"/><rect x="155.68" y="93.86" width="1.2" height="1.2"/><rect x="161.94" y="6.22" width="1.2" height="1.2"/><rect x="161.94" y="12.48" width="1.2" height="1.2"/><rect x="161.94" y="18.74" width="1.2" height="1.2"/><rect x="161.94" y="31.26" width="1.2" height="1.2"/><rect x="161.94" y="37.52" width="1.2" height="1.2"/><rect x="161.94" y="43.78" width="1.2" height="1.2"/><rect x="161.94" y="56.30" width="1.2" height="1.2"/><rect x="161.94" y="62.56" width="1.2" height="1.2"/><rect x="161.94" y="68.82" width="1.2" height="1.2"/><rect x="161.94" y="81.34" width="1.2" height="1.2"/><rect x="161.94" y="87.60" width="1.2" height="1.2"/><rect x="161.94" y="93.86" width="1.2" height="1.2"/><rect x="168.20" y="6.22" width="1.2" height="1.2"/><rect x="168.20" y="12.48" width="1.2" height="1.2"/><rect x="168.20" y="18.74" width="1.2" height="1.2"/><rect x="168.20" y="31.26" width="1.2" height="1.2"/><rect x="168.20" y="37.52" width="1.2" height="1.2"/><rect x="168.20" y="43.78" width="1.2" height="1.2"/><rect x="168.20" y="56.30" width="1.2" height="1.2"/><rect x="168.20" y="62.56" width="1.2" height="1.2"/><rect x="168.20" y="68.82" width="1.2" height="1.2"/><rect x="168.20" y="81.34" width="1.2" height="1.2"/><rect x="168.20" y="87.60" width="1.2" height="1.2"/><rect x="168.20" y="93.86" width="1.2" height="1.2"/></g><path d="M43.90 0V100.20" stroke="#b4cad8" stroke-width="0.8" fill="none"/><path d="M0 50.64H170.00" stroke="#a8b8c4" stroke-opacity="0.8" stroke-width="0.8" fill="none"/></svg>
<div style="left:864.3px;top:61.5px;width:6.7px;height:396px;background:#eeeeee;"></div>
<svg style="position:absolute;left:864.3px;top:63.5px;" width="6.7" height="6" viewBox="0 0 6.7 6"><path d="M.8 4.200L3.300 1.600L5.800 4.200" stroke="#b0b0b0" stroke-width=".8" fill="none"/></svg>
<svg style="position:absolute;left:864.3px;top:449.5px;" width="6.7" height="6" viewBox="0 0 6.7 6"><path d="M.8 1.600L3.300 4.200L5.800 1.600" stroke="#b0b0b0" stroke-width=".8" fill="none"/></svg>
<div style="left:864.3px;top:457.7px;width:6.7px;height:6.3px;background:#c9c9c9;"></div>
<div style="left:46.5px;top:457px;width:824.5px;height:7px;overflow:hidden;">
<div style="left:0.0px;top:0.5px;width:817.8px;height:6.5px;background:#efefef;"></div>
<div style="left:0.0px;top:0px;width:162px;height:0.8px;background:#909090;"></div>
<div style="left:1.0px;top:1px;width:27.5px;height:6px;background:#ffffff;"></div>
<div style="left:28.5px;top:1px;width:15px;height:6px;background:#d4d4d4;border-left:0.7px solid #999;border-right:0.7px solid #999;"></div>
<div style="left:43.5px;top:1px;width:110px;height:6px;background:#d8d8d8;"></div>
<div style="left:153.5px;top:1px;width:8.5px;height:6px;background:#dcdcdc;border-left:0.7px solid #999;border-right:0.7px solid #999;"></div>
<div class="t" style="left:4.0px;top:2.55px;font-size:7px;line-height:8.05px;color:#333;white-space:nowrap;transform:scaleX(0.8846);transform-origin:0 0;">16.67%</div>
<div class="t" style="left:69.5px;top:2.55px;font-size:7px;line-height:8.05px;color:#333;white-space:nowrap;transform:scaleX(0.9286);transform-origin:0 0;">Doc: 48.2M/0 bytes</div>
<svg style="position:absolute;left:155.5px;top:2px;" width="5" height="5" viewBox="0 0 5 5"><path d="M1 0L4.5 3.2L1 6.4Z" fill="#111"/></svg>
<div class="t" style="left:167.5px;top:2.13px;font-size:8px;line-height:9.2px;color:#aaa;white-space:nowrap;">‹</div>
<div class="t" style="left:810.5px;top:2.13px;font-size:8px;line-height:9.2px;color:#aaa;white-space:nowrap;">›</div>
<div style="left:817.8px;top:0.7px;width:6.7px;height:6.3px;background:#c9c9c9;"></div>
</div>
<div style="left:8px;top:49.5px;width:38.5px;height:414.5px;background:#666666;"></div>
<div style="left:8px;top:49.5px;width:38.5px;height:9px;background:linear-gradient(#3c3c3c,#585858);"></div>
<svg style="position:absolute;left:11.5px;top:51.5px;" width="6" height="5" viewBox="0 0 6 5"><path d="M2.6 0.5L0.6 2.5L2.6 4.5ZM5.4 0.5L3.4 2.5L5.4 4.5Z" fill="#d0d0d0"/></svg>
<div style="left:8.5px;top:58.5px;width:37.5px;height:229.5px;background:#d5d5d5;"></div>
<div style="left:45.6px;top:58.5px;width:0.9px;height:229.5px;background:#9c9c9c;"></div>
<div style="left:13px;top:60px;width:28px;height:1.6px;background-image:repeating-linear-gradient(90deg,#aaa 0 1px,transparent 1px 2px);opacity:.8;"></div>
<div style="left:10px;top:110.3px;width:34px;height:0.8px;background:#a6a6a6;"></div>
<div style="left:10px;top:111.1px;width:34px;height:0.8px;background:#ececec;"></div>
<div style="left:10px;top:170.6px;width:34px;height:0.8px;background:#a6a6a6;"></div>
<div style="left:10px;top:171.4px;width:34px;height:0.8px;background:#ececec;"></div>
<div style="left:10px;top:204px;width:34px;height:0.8px;background:#a6a6a6;"></div>
<div style="left:10px;top:204.8px;width:34px;height:0.8px;background:#ececec;"></div>
<div style="left:43px;top:187px;width:194px;height:135.5px;background:#0086f6;"></div>
<div style="left:52px;top:196px;width:175px;height:117.5px;background:#d7d7d7;border-right:1.2px solid #6e6e6e;border-bottom:1.2px solid #8a8a8a;border-top:0.8px solid #bdbdbd;"></div>
<div style="left:52px;top:273.18px;width:174px;height:18.72px;background:#ffffff;"></div>
<div class="t" style="left:94px;top:200.29px;font-size:8.8px;line-height:10.12px;color:#141414;white-space:nowrap;transform:scaleX(1.1111);transform-origin:0 0;-webkit-text-stroke:0.12px #141414;">Rectangle Tool</div>
<div class="t" style="left:212px;top:200.29px;font-size:8.8px;line-height:10.12px;color:#141414;white-space:nowrap;transform:scaleX(1.0228);transform-origin:0 0;-webkit-text-stroke:0.12px #141414;">U</div>
<div class="t" style="left:94px;top:219.01px;font-size:8.8px;line-height:10.12px;color:#141414;white-space:nowrap;transform:scaleX(1.1277);transform-origin:0 0;-webkit-text-stroke:0.12px #141414;">Rounded Rectangle Tool</div>
<div class="t" style="left:212px;top:219.01px;font-size:8.8px;line-height:10.12px;color:#141414;white-space:nowrap;transform:scaleX(1.0228);transform-origin:0 0;-webkit-text-stroke:0.12px #141414;">U</div>
<div class="t" style="left:94px;top:237.73px;font-size:8.8px;line-height:10.12px;color:#141414;white-space:nowrap;transform:scaleX(1.1048);transform-origin:0 0;-webkit-text-stroke:0.12px #141414;">Ellipse Tool</div>
<div class="t" style="left:212px;top:237.73px;font-size:8.8px;line-height:10.12px;color:#141414;white-space:nowrap;transform:scaleX(1.0228);transform-origin:0 0;-webkit-text-stroke:0.12px #141414;">U</div>
<div class="t" style="left:94px;top:256.45px;font-size:8.8px;line-height:10.12px;color:#141414;white-space:nowrap;transform:scaleX(1.1946);transform-origin:0 0;-webkit-text-stroke:0.12px #141414;">Polygon Tool</div>
<div class="t" style="left:212px;top:256.45px;font-size:8.8px;line-height:10.12px;color:#141414;white-space:nowrap;transform:scaleX(1.0228);transform-origin:0 0;-webkit-text-stroke:0.12px #141414;">U</div>
<div class="t" style="left:94px;top:275.17px;font-size:8.8px;line-height:10.12px;color:#141414;white-space:nowrap;transform:scaleX(1.1408);transform-origin:0 0;-webkit-text-stroke:0.12px #141414;">Line Tool</div>
<div class="t" style="left:212px;top:275.17px;font-size:8.8px;line-height:10.12px;color:#141414;white-space:nowrap;transform:scaleX(1.0228);transform-origin:0 0;-webkit-text-stroke:0.12px #141414;">U</div>
<div class="t" style="left:94px;top:293.89px;font-size:8.8px;line-height:10.12px;color:#141414;white-space:nowrap;transform:scaleX(1.1287);transform-origin:0 0;-webkit-text-stroke:0.12px #141414;">Custom Shape Tool</div>
<div class="t" style="left:212px;top:293.89px;font-size:8.8px;line-height:10.12px;color:#141414;white-space:nowrap;transform:scaleX(1.0228);transform-origin:0 0;-webkit-text-stroke:0.12px #141414;">U</div>
<div style="left:60.2px;top:204.2px;width:3px;height:3px;background:#000;"></div>
<svg style="position:absolute;left:70px;top:196px;" width="24" height="116" viewBox="0 0 24 116"><defs><linearGradient id="gi" x1="0" y1="0" x2="0" y2="1"><stop offset="0" stop-color="#cfcfcf"/><stop offset="1" stop-color="#9a9a9a"/></linearGradient></defs><rect x="5" y="5.6" width="13.6" height="10.6" fill="url(#gi)" stroke="#555" stroke-width="0.9"/><path d="M5.2 16.9H18.8" stroke="#777" stroke-width="0.8" opacity=".6"/><rect x="5.2" y="24.3" width="13.4" height="10.4" rx="2.2" fill="url(#gi)" stroke="#555" stroke-width="0.9"/><path d="M6.6 35.5H17.4" stroke="#777" stroke-width="0.8" opacity=".6"/><ellipse cx="12.3" cy="47.7" rx="7.6" ry="5.3" fill="url(#gi)" stroke="#555" stroke-width="0.9"/><path d="M4.9 66.1L8.6 60.2H16.2L19.6 66.1L16.2 72H8.6Z" fill="url(#gi)" stroke="#555" stroke-width="0.9" stroke-linejoin="round"/><path d="M6 91.5L19 78.5" stroke="#1b86ad" stroke-width="1.1" fill="none"/><path d="M14.00 97.30C15.10 97.63 14.77 97.30 15.30 98.60C15.83 99.90 14.53 100.67 15.60 101.20C16.67 101.73 16.83 100.33 18.50 100.20C20.17 100.07 20.23 99.67 20.60 100.80C20.97 101.93 21.07 102.27 19.60 103.60C18.13 104.93 17.13 103.50 16.20 104.80C15.27 106.10 16.57 105.77 16.80 107.50C17.03 109.23 17.63 108.70 16.90 110.00C16.17 111.30 16.03 111.53 14.60 111.40C13.17 111.27 13.60 110.80 12.60 109.60C11.60 108.40 12.80 108.00 11.60 107.80C10.40 107.60 10.80 107.87 9.00 109.00C7.20 110.13 7.90 111.00 6.20 111.20C4.50 111.40 4.43 111.00 3.90 109.60C3.37 108.20 3.43 108.47 4.60 107.00C5.77 105.53 7.07 106.20 7.40 105.20C7.73 104.20 6.60 104.87 5.60 104.00C4.60 103.13 4.47 103.73 4.40 102.60C4.33 101.47 4.33 101.37 5.40 100.60C6.47 99.83 5.87 99.97 7.60 100.30C9.33 100.63 9.33 102.03 10.60 101.60C11.87 101.17 10.93 100.33 11.40 99.00C11.87 97.67 11.13 98.17 12.00 97.60C12.87 97.03 12.90 96.97 14.00 97.30Z" fill="url(#gi)" stroke="#4c4c4c" stroke-width="0.9" stroke-linejoin="round"/></svg>
<div style="left:692.5px;top:161.3px;width:142.29999999999995px;height:256.09999999999997px;background:#dadada;box-shadow:0.5px 0.5px 1.5px rgba(0,0,0,.3);"></div>
<div style="left:692.5px;top:161.3px;width:142.29999999999995px;height:12.6px;background:linear-gradient(#9e9e9e,#b4b4b4);border-top:1px solid #555;"></div>
<div style="left:693.3px;top:162.3px;width:31px;height:11.8px;background:#dadada;"></div>
<div style="left:724px;top:162.8px;width:35px;height:11px;background:linear-gradient(#a8a8a8,#bababa);border-right:0.8px solid #8a8a8a;"></div>
<div style="left:759px;top:162.8px;width:30px;height:11px;background:linear-gradient(#a8a8a8,#bababa);border-right:0.8px solid #8a8a8a;"></div>
<div class="t" style="left:696.5px;top:165.29px;font-size:6.2px;line-height:7.13px;color:#2a2a2a;white-space:nowrap;font-weight:bold;transform:scaleX(0.9561);transform-origin:0 0;">LAYERS</div>
<div class="t" style="left:728.5px;top:165.29px;font-size:6.2px;line-height:7.13px;color:#3c3c3c;white-space:nowrap;font-weight:bold;transform:scaleX(0.9898);transform-origin:0 0;">CHANNEL</div>
<div class="t" style="left:763px;top:165.29px;font-size:6.2px;line-height:7.13px;color:#3c3c3c;white-space:nowrap;font-weight:bold;transform:scaleX(1.0203);transform-origin:0 0;">PATHS</div>
<svg style="position:absolute;left:807px;top:165.5px;" width="24" height="6" viewBox="0 0 24 6"><path d="M2 .8L4.300 3L2 5.200ZM5 .8L7.300 3L5 5.200Z" fill="#333"/><path d="M11.5 0V6" stroke="#888" stroke-width=".6"/><path d="M15 2.200L17.200 2.200L16.100 3.800Z" fill="#333"/><path d="M18 1.200H23M18 3H23M18 4.800H23" stroke="#333" stroke-width=".9"/></svg>
<div style="left:695.6px;top:176px;width:73.6px;height:11.4px;background:#ffffff;border:0.8px solid #9a9a9a;border-radius:1.5px;"></div>
<div class="t" style="left:698.5px;top:178.15px;font-size:7px;line-height:8.05px;color:#222;white-space:nowrap;transform:scaleX(0.9310);transform-origin:0 0;">Normal</div>
<svg style="position:absolute;left:761px;top:179.5px;" width="6" height="5" viewBox="0 0 6 5"><path d="M.6 1L3 3.600L5.400 1" stroke="#666" stroke-width=".8" fill="none"/></svg>
<div class="t" style="left:771.5px;top:178.22px;font-size:6.6px;line-height:7.59px;color:#1c1c1c;white-space:nowrap;font-weight:bold;transform:scaleX(0.9089);transform-origin:0 0;">Opacity:</div>
<div style="left:798px;top:176px;width:23px;height:11.4px;background:#ffffff;border:0.8px solid #a6a6a6;"></div>
<div class="t" style="left:801.5px;top:178.52px;font-size:6.6px;line-height:7.59px;color:#222;white-space:nowrap;transform:scaleX(0.9183);transform-origin:0 0;">100%</div>
<div style="left:822px;top:176px;width:9px;height:11.4px;background:#ececec;border:0.8px solid #a0a0a0;"></div>
<svg style="position:absolute;left:825px;top:179.3px;" width="4" height="5" viewBox="0 0 4 5"><path d="M.6 .4L3.200 2.500L.6 4.600Z" fill="#222"/></svg>
<div style="left:693.5px;top:189.6px;width:140.29999999999995px;height:0.8px;background:#b4b4b4;"></div>
<div class="t" style="left:697.5px;top:194.72px;font-size:6.6px;line-height:7.59px;color:#1c1c1c;white-space:nowrap;font-weight:bold;transform:scaleX(0.8807);transform-origin:0 0;">Lock:</div>
<div style="left:717.5px;top:193.5px;width:7.5px;height:7.5px;background:#f2f2f2;border:0.7px solid #999;background-image:linear-gradient(45deg,#ccc 25%,transparent 25%,transparent 75%,#ccc 75%),linear-gradient(45deg,#ccc 25%,transparent 25%,transparent 75%,#ccc 75%);background-size:3px 3px;background-position:0 0,1.5px 1.5px;"></div>
<svg style="position:absolute;left:729px;top:192.5px;" width="9" height="9" viewBox="0 0 9 9"><path d="M1 8.200C2.500 7.500 3 6 3.800 5.200L7.800 1.200L8.200 1.600L4.500 5.800C3.500 6.800 2.500 8 1 8.200Z" fill="#666"/></svg>
<svg style="position:absolute;left:740.5px;top:192.5px;" width="9" height="9" viewBox="0 0 9 9"><path d="M4.500 .3L6 2H5V4H7V3L8.700 4.500L7 6V5H5V7H6L4.500 8.700L3 7H4V5H2V6L.3 4.500L2 3V4H4V2H3Z" fill="#222"/></svg>
<svg style="position:absolute;left:752.5px;top:192.5px;" width="8" height="9" viewBox="0 0 8 9"><rect x="1" y="4" width="6" height="4.500" fill="#222"/><path d="M2.200 4V2.800A1.800 1.800 0 0 1 5.800 2.800V4" stroke="#222" stroke-width="1" fill="none"/></svg>
<div class="t" style="left:787.5px;top:194.72px;font-size:6.6px;line-height:7.59px;color:#1c1c1c;white-space:nowrap;font-weight:bold;transform:scaleX(0.7673);transform-origin:0 0;">Fill:</div>
<div style="left:798px;top:192.3px;width:23px;height:11.4px;background:#ffffff;border:0.8px solid #a6a6a6;"></div>
<div class="t" style="left:801.5px;top:194.92px;font-size:6.6px;line-height:7.59px;color:#222;white-space:nowrap;transform:scaleX(0.9183);transform-origin:0 0;">100%</div>
<div style="left:822px;top:192.3px;width:9px;height:11.4px;background:#ececec;border:0.8px solid #a0a0a0;"></div>
<svg style="position:absolute;left:825px;top:195.6px;" width="4" height="5" viewBox="0 0 4 5"><path d="M.6 .4L3.200 2.500L.6 4.600Z" fill="#222"/></svg>
<div style="left:693.3px;top:205.8px;width:131px;height:199.7px;background:#d8d8d8;"></div>
<div style="left:824.2px;top:205.8px;width:10px;height:199.7px;background:#ebebeb;"></div>
<svg style="position:absolute;left:826px;top:209px;" width="7" height="5" viewBox="0 0 7 5"><path d="M.8 4L3.500 1.200L6.200 4" stroke="#aaa" stroke-width=".8" fill="none"/></svg>
<svg style="position:absolute;left:826px;top:398px;" width="7" height="5" viewBox="0 0 7 5"><path d="M.8 1L3.500 3.800L6.200 1" stroke="#aaa" stroke-width=".8" fill="none"/></svg>
<div style="left:693.3px;top:205.8px;width:131px;height:0.8px;background:#a9a9a9;"></div>
<div style="left:707.6px;top:205.8px;width:0.7px;height:24.85px;background:#b0b0b0;"></div>
<div style="left:695.2px;top:213.2px;width:10px;height:10px;background:#e4e4e4;border:0.6px solid #c4c4c4;"></div>
<svg style="position:absolute;left:695.3px;top:214.7px;" width="10" height="7.5" viewBox="0 0 10 7.5"><path d="M.3 3.400C2 -.2 7.700 -.2 9.500 3.400C7.700 7.200 2 7.200 .3 3.400Z" fill="#262626"/><ellipse cx="4.900" cy="2" rx="2" ry=".9" fill="#8c8c8c"/><path d="M.3 3.400C2 1.400 7.700 1.400 9.500 3.400" stroke="#555" stroke-width=".5" fill="none"/></svg>
<div style="left:710.2px;top:208.3px;width:20.4px;height:20.2px;background:#00488a;border:0.8px solid #333;"></div>
<div style="left:711.2px;top:222.8px;width:18.4px;height:4.8px;background:#f4f4f4;"></div>
<svg style="position:absolute;left:711.2px;top:222.8px;" width="18.4" height="4.8" viewBox="0 0 18.4 4.8"><path d="M1.500 3.200H16.900" stroke="#555" stroke-width=".7"/><path d="M9.200 1L10.800 4H7.600Z" fill="#333"/></svg>
<svg style="position:absolute;left:732.3px;top:212.8px;" width="5" height="11" viewBox="0 0 5 11"><rect x=".6" y=".6" width="3.800" height="4.600" rx="1.600" fill="none" stroke="#777" stroke-width=".9"/><rect x=".6" y="5.600" width="3.800" height="4.600" rx="1.600" fill="none" stroke="#777" stroke-width=".9"/><path d="M2.500 3.500V7.500" stroke="#666" stroke-width=".9"/></svg>
<div style="left:740px;top:208.3px;width:17.3px;height:20.2px;background:#828282;border:0.9px solid #333;"></div>
<svg style="position:absolute;left:743px;top:215.6px;" width="6" height="6" viewBox="0 0 6 6"><circle cx="2.600" cy="2.800" r="1.600" fill="#fff" stroke="#222" stroke-width=".7"/></svg>
<div class="t" style="left:762.3px;top:215.41px;font-size:6.5px;line-height:7.47px;color:#1c1c1c;white-space:nowrap;transform:scaleX(0.9937);transform-origin:0 0;-webkit-text-stroke:0.2px #1c1c1c;">Shape 2 copy</div>
<div style="left:693.3px;top:230.65px;width:131px;height:0.8px;background:#a9a9a9;"></div>
<div style="left:707.6px;top:230.65px;width:0.7px;height:24.85px;background:#b0b0b0;"></div>
<div style="left:695.2px;top:238.05px;width:10px;height:10px;background:#e4e4e4;border:0.6px solid #c4c4c4;"></div>
<svg style="position:absolute;left:695.3px;top:239.55px;" width="10" height="7.5" viewBox="0 0 10 7.5"><path d="M.3 3.400C2 -.2 7.700 -.2 9.500 3.400C7.700 7.200 2 7.200 .3 3.400Z" fill="#262626"/><ellipse cx="4.900" cy="2" rx="2" ry=".9" fill="#8c8c8c"/><path d="M.3 3.400C2 1.400 7.700 1.400 9.500 3.400" stroke="#555" stroke-width=".5" fill="none"/></svg>
<div style="left:710.2px;top:233.15px;width:20.4px;height:20.2px;background:#00488a;border:0.8px solid #333;"></div>
<div style="left:711.2px;top:247.65px;width:18.4px;height:4.8px;background:#f4f4f4;"></div>
<svg style="position:absolute;left:711.2px;top:247.65px;" width="18.4" height="4.8" viewBox="0 0 18.4 4.8"><path d="M1.500 3.200H16.900" stroke="#555" stroke-width=".7"/><path d="M9.200 1L10.800 4H7.600Z" fill="#333"/></svg>
<svg style="position:absolute;left:732.3px;top:237.65px;" width="5" height="11" viewBox="0 0 5 11"><rect x=".6" y=".6" width="3.800" height="4.600" rx="1.600" fill="none" stroke="#777" stroke-width=".9"/><rect x=".6" y="5.600" width="3.800" height="4.600" rx="1.600" fill="none" stroke="#777" stroke-width=".9"/><path d="M2.500 3.500V7.500" stroke="#666" stroke-width=".9"/></svg>
<div style="left:740px;top:233.15px;width:17.3px;height:20.2px;background:#828282;border:0.9px solid #333;"></div>
<svg style="position:absolute;left:743px;top:237.95px;" width="6" height="6" viewBox="0 0 6 6"><circle cx="2.600" cy="2.800" r="1.600" fill="#fff" stroke="#222" stroke-width=".7"/></svg>
<div class="t" style="left:762.3px;top:240.26px;font-size:6.5px;line-height:7.47px;color:#1c1c1c;white-space:nowrap;transform:scaleX(0.9085);transform-origin:0 0;-webkit-text-stroke:0.2px #1c1c1c;">Shape 2</div>
<div style="left:693.3px;top:255.5px;width:131px;height:0.8px;background:#a9a9a9;"></div>
<div style="left:707.6px;top:255.5px;width:0.7px;height:24.85px;background:#b0b0b0;"></div>
<div style="left:695.2px;top:262.9px;width:10px;height:10px;background:#e4e4e4;border:0.6px solid #c4c4c4;"></div>
<svg style="position:absolute;left:695.3px;top:264.4px;" width="10" height="7.5" viewBox="0 0 10 7.5"><path d="M.3 3.400C2 -.2 7.700 -.2 9.500 3.400C7.700 7.200 2 7.200 .3 3.400Z" fill="#262626"/><ellipse cx="4.900" cy="2" rx="2" ry=".9" fill="#8c8c8c"/><path d="M.3 3.400C2 1.400 7.700 1.400 9.500 3.400" stroke="#555" stroke-width=".5" fill="none"/></svg>
<div style="left:710.2px;top:258.0px;width:20.4px;height:20.2px;background:#0042a8;border:0.8px solid #333;"></div>
<div style="left:711.2px;top:272.5px;width:18.4px;height:4.8px;background:#f4f4f4;"></div>
<svg style="position:absolute;left:711.2px;top:272.5px;" width="18.4" height="4.8" viewBox="0 0 18.4 4.8"><path d="M1.500 3.200H16.900" stroke="#555" stroke-width=".7"/><path d="M9.200 1L10.800 4H7.600Z" fill="#333"/></svg>
<svg style="position:absolute;left:732.3px;top:262.5px;" width="5" height="11" viewBox="0 0 5 11"><rect x=".6" y=".6" width="3.800" height="4.600" rx="1.600" fill="none" stroke="#777" stroke-width=".9"/><rect x=".6" y="5.600" width="3.800" height="4.600" rx="1.600" fill="none" stroke="#777" stroke-width=".9"/><path d="M2.500 3.500V7.500" stroke="#666" stroke-width=".9"/></svg>
<div style="left:740px;top:258.0px;width:17.3px;height:20.2px;background:#828282;border:0.9px solid #333;"></div>
<svg style="position:absolute;left:745.2px;top:261.7px;" width="9" height="6" viewBox="0 0 9 6"><rect x=".8" y=".8" width="6.400" height="3.000" rx=".8" fill="#fff" stroke="#222" stroke-width=".6"/></svg>
<div class="t" style="left:762.3px;top:265.11px;font-size:6.5px;line-height:7.47px;color:#1c1c1c;white-space:nowrap;transform:scaleX(1.0063);transform-origin:0 0;-webkit-text-stroke:0.2px #1c1c1c;">Shape 1 copy</div>
<div style="left:693.3px;top:280.35px;width:131px;height:0.8px;background:#a9a9a9;"></div>
<div style="left:708px;top:280.95px;width:116.2px;height:24.450000000000003px;background:#007add;"></div>
<div style="left:707.6px;top:280.35px;width:0.7px;height:24.85px;background:#b0b0b0;"></div>
<div style="left:695.2px;top:287.75px;width:10px;height:10px;background:#e4e4e4;border:0.6px solid #c4c4c4;"></div>
<svg style="position:absolute;left:695.3px;top:289.25px;" width="10" height="7.5" viewBox="0 0 10 7.5"><path d="M.3 3.400C2 -.2 7.700 -.2 9.500 3.400C7.700 7.200 2 7.200 .3 3.400Z" fill="#262626"/><ellipse cx="4.900" cy="2" rx="2" ry=".9" fill="#8c8c8c"/><path d="M.3 3.400C2 1.400 7.700 1.400 9.500 3.400" stroke="#555" stroke-width=".5" fill="none"/></svg>
<div style="left:710.2px;top:282.85px;width:20.4px;height:20.2px;background:#0042a8;border:0.8px solid #333;"></div>
<div style="left:711.2px;top:297.35px;width:18.4px;height:4.8px;background:#f4f4f4;"></div>
<svg style="position:absolute;left:711.2px;top:297.35px;" width="18.4" height="4.8" viewBox="0 0 18.4 4.8"><path d="M1.500 3.200H16.900" stroke="#555" stroke-width=".7"/><path d="M9.200 1L10.800 4H7.600Z" fill="#333"/></svg>
<svg style="position:absolute;left:732.3px;top:287.35px;" width="5" height="11" viewBox="0 0 5 11"><rect x=".6" y=".6" width="3.800" height="4.600" rx="1.600" fill="none" stroke="#777" stroke-width=".9"/><rect x=".6" y="5.600" width="3.800" height="4.600" rx="1.600" fill="none" stroke="#777" stroke-width=".9"/><path d="M2.500 3.500V7.500" stroke="#666" stroke-width=".9"/></svg>
<div style="left:740px;top:282.85px;width:17.3px;height:20.2px;background:#828282;border:0.9px solid #333;"></div>
<svg style="position:absolute;left:745.2px;top:286.55px;" width="9" height="6" viewBox="0 0 9 6"><rect x=".8" y=".8" width="6.400" height="3.000" rx=".8" fill="#fff" stroke="#222" stroke-width=".6"/></svg>
<div class="t" style="left:762.3px;top:289.96px;font-size:6.5px;line-height:7.47px;color:#fff;white-space:nowrap;font-weight:bold;transform:scaleX(0.9829);transform-origin:0 0;">Shape 1</div>
<div style="left:693.3px;top:305.2px;width:131px;height:0.8px;background:#a9a9a9;"></div>
<div style="left:707.6px;top:305.2px;width:0.7px;height:24.85px;background:#b0b0b0;"></div>
<div style="left:695.2px;top:312.6px;width:10px;height:10px;background:#e4e4e4;border:0.6px solid #c4c4c4;"></div>
<svg style="position:absolute;left:695.3px;top:314.1px;" width="10" height="7.5" viewBox="0 0 10 7.5"><path d="M.3 3.400C2 -.2 7.700 -.2 9.500 3.400C7.700 7.200 2 7.200 .3 3.400Z" fill="#262626"/><ellipse cx="4.900" cy="2" rx="2" ry=".9" fill="#8c8c8c"/><path d="M.3 3.400C2 1.400 7.700 1.400 9.500 3.400" stroke="#555" stroke-width=".5" fill="none"/></svg>
<div style="left:710.2px;top:307.7px;width:16.5px;height:20.2px;background:#ffffff;border:0.8px solid #555;"></div>
<div class="t" style="left:732px;top:314.13px;font-size:6.8px;line-height:7.82px;color:#222;white-space:nowrap;font-style:italic;transform:scaleX(0.9920);transform-origin:0 0;">Background</div>
<svg style="position:absolute;left:807px;top:312.7px;" width="8" height="9" viewBox="0 0 8 9"><rect x="1.200" y="3.800" width="5.400" height="4.200" fill="#eee" stroke="#222" stroke-width=".8"/><path d="M2.400 3.800V2.800A1.500 1.500 0 0 1 5.400 2.800V3.800" stroke="#222" stroke-width=".8" fill="none"/></svg>
<div style="left:693.3px;top:330.05px;width:131px;height:0.8px;background:#a9a9a9;"></div>
<div style="left:693.3px;top:405.5px;width:140.69999999999996px;height:11.099999999999977px;background:#d6d6d6;"></div>
<div style="left:693.3px;top:405.2px;width:140.69999999999996px;height:0.8px;background:#b8b8b8;"></div>
<svg style="position:absolute;left:706.5px;top:406.8px;" width="10" height="8" viewBox="0 0 10 8"><g fill="none" stroke="#555" stroke-width=".9"><rect x=".8" y="2.600" width="4.400" height="2.800" rx="1.400"/><rect x="4.600" y="2.600" width="4.400" height="2.800" rx="1.400"/></g></svg>
<div class="t" style="left:725.5px;top:407.30px;font-size:7.6px;line-height:8.74px;color:#222;white-space:nowrap;font-style:italic;transform:scaleX(1.0996);transform-origin:0 0;font-family:'Liberation Serif',serif;font-weight:bold;">fx</div>
<div class="t" style="left:732.6px;top:408.15px;font-size:7px;line-height:8.05px;color:#222;white-space:nowrap;">.</div>
<svg style="position:absolute;left:742px;top:406.8px;" width="9" height="8" viewBox="0 0 9 8"><rect x=".7" y=".7" width="7.400" height="6.400" fill="#ddd" stroke="#333" stroke-width=".8"/><circle cx="4.400" cy="3.900" r="1.900" fill="#fff" stroke="#333" stroke-width=".6"/></svg>
<svg style="position:absolute;left:759.5px;top:406.8px;" width="11" height="8" viewBox="0 0 11 8"><circle cx="4" cy="4" r="3.200" fill="#fff" stroke="#222" stroke-width=".8"/><path d="M6.300 1.700A3.200 3.200 0 0 1 1.700 6.300Z" fill="#222"/><rect x="8.400" y="6.200" width="1.200" height="1.200" fill="#222"/></svg>
<svg style="position:absolute;left:777px;top:407.3px;" width="9" height="7" viewBox="0 0 9 7"><path d="M.6 1.600H3.400L4.200 2.600H8.200V6.200H.6Z" fill="#eee" stroke="#888" stroke-width=".7"/></svg>
<svg style="position:absolute;left:794px;top:407px;" width="9" height="8" viewBox="0 0 9 8"><rect x="1.200" y="1.600" width="5.800" height="5.600" fill="#f2f2f2" stroke="#444" stroke-width=".8"/><path d="M3 5.500H5.500V3" stroke="#333" stroke-width=".8" fill="none"/></svg>
<svg style="position:absolute;left:811.5px;top:406.6px;" width="8" height="9" viewBox="0 0 8 9"><path d="M1.600 2.800H6.400L5.900 8H2.100Z" fill="#ccc" stroke="#333" stroke-width=".8"/><path d="M1 2.400H7M3 1.200H5" stroke="#333" stroke-width=".9"/></svg>
<svg style="position:absolute;left:826.5px;top:408.5px;" width="7" height="7" viewBox="0 0 7 7"><path d="M6 1L1 6M6 3.500L3.500 6" stroke="#aaa" stroke-width=".7"/></svg>
<div style="left:692.2px;top:161.3px;width:1px;height:256.09999999999997px;background:#8a8a8a;"></div>
<div style="left:833.9px;top:161.3px;width:1px;height:256.09999999999997px;background:#8a8a8a;"></div>
<div style="left:692.2px;top:416.5px;width:142.69999999999996px;height:1px;background:#8a8a8a;"></div>
<div style="left:766.5px;top:81.5px;width:23.100000000000023px;height:74px;background:#d6d6d6;border:0.8px solid #8e8e8e;"></div>
<div style="left:789.6px;top:81.5px;width:23.5px;height:78.6px;background:#d6d6d6;border:0.8px solid #8e8e8e;"></div>
<div style="left:813.1px;top:81.5px;width:22.299999999999955px;height:78.6px;background:#c6c6c6;border:0.8px solid #8e8e8e;"></div>
<div style="left:813.1px;top:81.5px;width:22.299999999999955px;height:54.8px;background:#d6d6d6;border:0.8px solid #8e8e8e;"></div>
<div style="left:835.4px;top:81.5px;width:22.800000000000068px;height:140px;background:#d6d6d6;border:0.8px solid #8e8e8e;"></div>
<div style="left:766.5px;top:81.5px;width:91.70000000000005px;height:8px;background:linear-gradient(#4a4a4a,#3a3a3a);"></div>
<svg style="position:absolute;left:782px;top:83.3px;" width="7" height="5" viewBox="0 0 7 5"><path d="M.8 .5L3 2.400L.8 4.300ZM3.600 .5L5.800 2.400L3.600 4.300Z" fill="#cfcfcf"/></svg>
<svg style="position:absolute;left:805px;top:83.3px;" width="7" height="5" viewBox="0 0 7 5"><path d="M.8 .5L3 2.400L.8 4.300ZM3.600 .5L5.800 2.400L3.600 4.300Z" fill="#cfcfcf"/></svg>
<svg style="position:absolute;left:828.3px;top:83.3px;" width="7" height="5" viewBox="0 0 7 5"><path d="M.8 .5L3 2.400L.8 4.300ZM3.600 .5L5.800 2.400L3.600 4.300Z" fill="#cfcfcf"/></svg>
<svg style="position:absolute;left:841px;top:83.3px;" width="7" height="5" viewBox="0 0 7 5"><path d="M.8 .5L3 2.400L.8 4.300ZM3.600 .5L5.800 2.400L3.600 4.300Z" fill="#cfcfcf"/></svg>
<svg style="position:absolute;left:850.5px;top:83px;" width="6" height="5.5" viewBox="0 0 6 5.5"><path d="M1 .8L5 4.800M5 .8L1 4.800" stroke="#d8d8d8" stroke-width="1"/></svg>
<div style="left:849px;top:83px;width:0.6px;height:5px;background:#777;"></div>
<div style="left:769.5px;top:92px;width:17px;height:1.6px;background-image:repeating-linear-gradient(90deg,#aeaeae 0 1px,transparent 1px 2px);"></div>
<div style="left:792.5px;top:92px;width:17px;height:1.6px;background-image:repeating-linear-gradient(90deg,#aeaeae 0 1px,transparent 1px 2px);"></div>
<div style="left:816px;top:92px;width:17px;height:1.6px;background-image:repeating-linear-gradient(90deg,#aeaeae 0 1px,transparent 1px 2px);"></div>
<div style="left:838.5px;top:92px;width:17px;height:1.6px;background-image:repeating-linear-gradient(90deg,#aeaeae 0 1px,transparent 1px 2px);"></div>
<div style="left:792.5px;top:118.5px;width:17px;height:1.6px;background-image:repeating-linear-gradient(90deg,#aeaeae 0 1px,transparent 1px 2px);"></div>
<div style="left:838.5px;top:158.6px;width:17px;height:1.6px;background-image:repeating-linear-gradient(90deg,#aeaeae 0 1px,transparent 1px 2px);"></div>
<div style="left:789.6px;top:116.5px;width:23.5px;height:0.8px;background:#8e8e8e;"></div>
<div style="left:835.4px;top:156px;width:22.800000000000068px;height:0.8px;background:#8e8e8e;"></div>
<div style="left:837px;top:162.7px;width:18.8px;height:18px;background:linear-gradient(#8c8c8c,#a4a4a4);border:0.8px solid #6a6a6a;border-radius:1.5px;"></div>
<svg style="position:absolute;left:766px;top:90px;" width="94" height="134" viewBox="0 0 94 134"><g transform="translate(5.5,12)"><path d="M0 1.500H11M3 5.500H11" stroke="#444" stroke-width="1.100"/><path d="M1 0L4.500 1.500L1 3Z" fill="#333"/><rect x="7" y="3.800" width="3.600" height="3.600" rx=".8" fill="#555"/></g><g transform="translate(7,29)"><path d="M1.500 4.500H8.500L8 10H2Z" fill="#333"/><path d="M3 4.500L1.800 .5M5 4.500V1M7 4.500L8.800 .8" stroke="#333" stroke-width="1"/><rect x="7.500" y="0" width="2.500" height="2.500" fill="#222"/></g><g transform="translate(6.500,49)"><path d="M4 1.500H7.500V5H9.500V7H2V5H4Z" fill="#555"/><path d="M1.500 9H10.500" stroke="#444" stroke-width="1.200"/><path d="M0 0H2.500M0 2H2.500M0 4H1.500" stroke="#666" stroke-width=".7"/></g><g transform="translate(30.500,10.500)"><rect x="0" y="0" width="3" height="3" fill="#444"/><rect x="0" y="4.200" width="3" height="3" fill="#444"/><rect x="0" y="8.400" width="3" height="3" fill="#444"/><path d="M5 6.500C8.500 6.500 8.500 2.500 5.500 2.500" stroke="#333" stroke-width="1.200" fill="none"/><path d="M4.300 2.500L6.600 .5V4.500Z" fill="#333"/></g><g transform="translate(32.500,41)"><circle cx="4" cy="4" r="3.600" fill="#fff" stroke="#222" stroke-width=".9"/><path d="M6.600 1.500A3.600 3.600 0 0 1 1.500 6.600Z" fill="#222"/></g><g transform="translate(31,56.500)"><rect x=".5" y=".5" width="10" height="8" fill="#777" stroke="#333" stroke-width=".9"/><circle cx="5.500" cy="4.500" r="2.600" fill="#fff"/></g><g transform="translate(51.500,9.500)"><path d="M.5 10L4.300 .8L8.200 10M2 6.800H6.800" stroke="#3a3a3a" stroke-width="1.500" fill="none"/><path d="M10 0V11.500" stroke="#333" stroke-width="1.100"/></g><g transform="translate(54,30.500)"><path d="M6.500 .5V9.500M4.500 .5V9.500" stroke="#555" stroke-width="1.100"/><path d="M4.500 .5H8M4.500 5.500A2.500 2.500 0 0 1 4.500 .5Z" fill="#555" stroke="#555" stroke-width=".6"/></g><g transform="translate(75.500,8.500)"><rect x="0" y="0" width="11" height="10" fill="#2e2e2e"/><path d="M0 3.400H11M0 6.700H11M3.700 0V10M7.400 0V10" stroke="#ccc" stroke-width=".7"/><rect x="0" y="0" width="3.700" height="3.400" fill="#ddd"/></g><g transform="translate(75,29.500)"><rect x="4.500" y=".5" width="7" height="6.500" fill="#ececec" stroke="#666" stroke-width=".8"/><path d="M11.500 1V7H5" stroke="#444" stroke-width="1" fill="none"/><text x="0" y="10.500" font-family="Liberation Serif, serif" font-style="italic" font-weight="bold" font-size="8" fill="#222">fx</text></g><g transform="translate(75.500,48)"><circle cx="5.500" cy="5.500" r="5.300" fill="#2c2c2c"/><circle cx="5.500" cy="2.900" r="1" fill="#fff"/><path d="M4.300 4.800H6.200V8.500M4.200 8.600H7.400" stroke="#fff" stroke-width="1.100" fill="none"/></g><g transform="translate(74.500,75.500)"><path d="M6 4.500L12 7.800L6 11.200L0 7.800Z" fill="#333"/><path d="M6 2.600L12 5.800L6 9.200L0 5.800Z" fill="#777"/><path d="M6 .5L12 3.800L6 7.200L0 3.800Z" fill="#f2f2f2"/></g><g transform="translate(75,96)"><circle cx="5.800" cy="4" r="3.600" fill="#555"/><circle cx="3.800" cy="7.400" r="3.600" fill="#333"/><circle cx="7.800" cy="7.400" r="3.600" fill="#8a8a8a"/><circle cx="5.800" cy="6.200" r="1.600" fill="#f4f4f4"/></g><g transform="translate(75,115)"><path d="M2 1.500H10L11 10.500C8 8.500 4 8.500 1 10.500Z" fill="#e6e6e6" stroke="#333" stroke-width=".9"/><rect x="0" y="0" width="2.600" height="2.600" fill="#222"/><rect x="9.400" y="0" width="2.600" height="2.600" fill="#222"/><rect x="0" y="9.400" width="2.200" height="2.200" fill="#fff" stroke="#222" stroke-width=".6"/><rect x="9.800" y="9.400" width="2.200" height="2.200" fill="#fff" stroke="#222" stroke-width=".6"/></g></svg>
<div style="left:353.5px;top:11.5px;width:0.8px;height:11px;background:#a4a4a4;"></div>
<div style="left:354.3px;top:11.5px;width:0.8px;height:11px;background:#f0f0f0;"></div>
<div style="left:364.5px;top:13px;width:10.2px;height:9px;background:#b9b9b9;border:0.9px solid #444;"></div>
<div class="t" style="left:366.2px;top:15.06px;font-size:5.8px;line-height:6.67px;color:#222;white-space:nowrap;font-weight:bold;transform:scaleX(1.0549);transform-origin:0 0;">Br</div>
<svg style="position:absolute;left:386.5px;top:12.5px;" width="12" height="10" viewBox="0 0 12 10"><path d="M.6 1H4L5 2.400H11.400V9.400H.6Z" fill="#c4c4c4" stroke="#444" stroke-width=".9"/></svg>
<div class="t" style="left:388.2px;top:15.44px;font-size:5.6px;line-height:6.44px;color:#222;white-space:nowrap;font-weight:bold;transform:scaleX(0.9895);transform-origin:0 0;">Mb</div>
<svg style="position:absolute;left:408.5px;top:12.5px;" width="14" height="10" viewBox="0 0 14 10"><rect x=".6" y=".8" width="12.600" height="8.400" fill="#e8e8e8" stroke="#444" stroke-width=".9"/><rect x=".6" y=".8" width="12.600" height="2.200" fill="#555"/><rect x=".6" y="3" width="2.400" height="6.200" fill="#999"/></svg>
<svg style="position:absolute;left:425.5px;top:16.3px;" width="4.4" height="2.6" viewBox="0 0 4.4 2.6"><path d="M0 0H4.4L2.2 2.6Z" fill="#222"/></svg>
<div class="t" style="left:446.2px;top:13.95px;font-size:7px;line-height:8.05px;color:#333;white-space:nowrap;transform:scaleX(0.9910);transform-origin:0 0;">16.7</div>
<svg style="position:absolute;left:466px;top:16.3px;" width="4.4" height="2.6" viewBox="0 0 4.4 2.6"><path d="M0 0H4.4L2.2 2.6Z" fill="#222"/></svg>
<svg style="position:absolute;left:482px;top:12.8px;" width="12" height="9.5" viewBox="0 0 12 9.5"><rect x=".5" y=".5" width="10.800" height="8.400" fill="#e4e4e4" stroke="#444" stroke-width=".9"/><rect x="1.500" y="1.500" width="3" height="6.400" fill="#666"/><rect x="5" y="1.500" width="2.600" height="6.400" fill="#888"/><rect x="8.200" y="1.500" width="2.400" height="2.800" fill="#666"/><rect x="8.200" y="5" width="2.400" height="2.900" fill="#666"/></svg>
<svg style="position:absolute;left:497.5px;top:16.3px;" width="4.4" height="2.6" viewBox="0 0 4.4 2.6"><path d="M0 0H4.4L2.2 2.6Z" fill="#222"/></svg>
<svg style="position:absolute;left:511.5px;top:12.5px;" width="13.5" height="10" viewBox="0 0 13.5 10"><rect x="2.500" y="1.800" width="8.500" height="6.400" fill="#888" stroke="#333" stroke-width=".9"/><path d="M0 .8H13.500M0 9.200H13.500M1 0V2M12.500 0V2M1 8V10M12.500 8V10" stroke="#444" stroke-width=".8"/></svg>
<svg style="position:absolute;left:528px;top:16.3px;" width="4.4" height="2.6" viewBox="0 0 4.4 2.6"><path d="M0 0H4.4L2.2 2.6Z" fill="#222"/></svg>
<div style="left:567px;top:11.5px;width:0.8px;height:11.5px;background:#a4a4a4;"></div>
<div style="left:567.8px;top:11.5px;width:0.8px;height:11.5px;background:#f0f0f0;"></div>
<div class="t" style="left:577.6px;top:14.33px;font-size:6.8px;line-height:7.82px;color:#222;white-space:nowrap;font-weight:bold;transform:scaleX(1.0539);transform-origin:0 0;">ESSENTIALS</div>
<div style="left:633px;top:10.2px;width:38px;height:14.3px;background:linear-gradient(#929292,#6e6e6e);border:0.8px solid #5c5c5c;border-radius:1px;"></div>
<div class="t" style="left:638.8px;top:14.33px;font-size:6.8px;line-height:7.82px;color:#fff;white-space:nowrap;font-weight:bold;transform:scaleX(1.0356);transform-origin:0 0;">DESIGN</div>
<div class="t" style="left:681.3px;top:14.33px;font-size:6.8px;line-height:7.82px;color:#222;white-space:nowrap;font-weight:bold;transform:scaleX(1.1568);transform-origin:0 0;">PAINTING</div>
<svg style="position:absolute;left:730.5px;top:14px;" width="10" height="7" viewBox="0 0 10 7"><path d="M1 .6L4 3.500L1 6.400M5.200 .6L8.200 3.500L5.200 6.400" stroke="#333" stroke-width="1.100" fill="none"/></svg>
<div style="left:749.3px;top:11.5px;width:0.8px;height:11.5px;background:#a4a4a4;"></div>
<div style="left:750.1px;top:11.5px;width:0.8px;height:11.5px;background:#f0f0f0;"></div>
<svg style="position:absolute;left:758px;top:11.5px;" width="13" height="12" viewBox="0 0 13 12"><circle cx="5.800" cy="6.400" r="4" fill="none" stroke="#1a8fbf" stroke-width="2.200"/><path d="M8.500 1.200L11.500 2.600L9.300 4.800Z" fill="#1a8fbf" stroke="#e0e0e0" stroke-width=".5"/></svg>
<div class="t" style="left:774.6px;top:14.05px;font-size:7px;line-height:8.05px;color:#444;white-space:nowrap;transform:scaleX(0.9180);transform-origin:0 0;">CS Live</div>
<svg style="position:absolute;left:799.8px;top:16.5px;" width="4.4" height="2.6" viewBox="0 0 4.4 2.6"><path d="M0 0H4.4L2.2 2.6Z" fill="#222"/></svg>
<div style="left:812.4px;top:11.4px;width:58.6px;height:11.3px;background:linear-gradient(#f4f4f4,#d2d2d2);border:0.8px solid #6a6a6a;border-radius:2.500px 0 0 2.500px;border-right:none;"></div>
<div style="left:828px;top:11.4px;width:0.8px;height:11.3px;background:#777;"></div>
<div style="left:844.5px;top:11.4px;width:26.5px;height:11.3px;background:linear-gradient(#e9674f,#d23a22 55%,#c8351f);border:0.8px solid #7a2a1e;border-right:none;"></div>
<svg style="position:absolute;left:817px;top:17px;" width="7.5" height="4" viewBox="0 0 7.5 4"><rect x=".5" y=".5" width="6.400" height="2.800" fill="#fff" stroke="#555" stroke-width=".8"/></svg>
<svg style="position:absolute;left:832.5px;top:13.5px;" width="9" height="8" viewBox="0 0 9 8"><rect x="2.800" y=".6" width="5.400" height="4.200" fill="#eee" stroke="#444" stroke-width=".9"/><rect x=".6" y="2.800" width="5.400" height="4.200" fill="#f4f4f4" stroke="#444" stroke-width=".9"/></svg>
<svg style="position:absolute;left:854px;top:13.3px;" width="8.5" height="8" viewBox="0 0 8.5 8"><path d="M1.200 1.200L7 6.800M7 1.200L1.200 6.800" stroke="#5c1c14" stroke-width="2.400" opacity=".5"/><path d="M1.200 1.200L7 6.800M7 1.200L1.200 6.800" stroke="#fff" stroke-width="1.500"/></svg>
<div style="left:11px;top:31px;width:2.2px;height:15px;background-image:repeating-linear-gradient(0deg,#b4b4b4 0 1px,transparent 1px 2px);"></div>
<svg style="position:absolute;left:8px;top:28px;" width="863" height="21" viewBox="0 0 863 21"><defs><linearGradient id="go" x1="0" y1="0" x2="0" y2="1"><stop offset="0" stop-color="#c8c8c8"/><stop offset="1" stop-color="#9c9c9c"/></linearGradient></defs><rect x="12.400" y="6.200" width="9.900" height="7.600" fill="url(#go)" stroke="#5a5a5a" stroke-width=".9"/><path d="M26.800 9H31.200L29 11.600Z" fill="#222"/><path d="M37.500 1.500V20" stroke="#b0b0b0" stroke-width=".8"/><path d="M38.300 1.500V20" stroke="#f2f2f2" stroke-width=".8"/><rect x="41" y="4.400" width="13.300" height="11.800" fill="#a9d1f0" stroke="#7fb2dc" stroke-width=".7"/><rect x="44.200" y="7" width="7" height="6.800" fill="#f4f4f4" stroke="#333" stroke-width=".9"/><g fill="#222"><rect x="43.200" y="6" width="2" height="2"/><rect x="50.200" y="6" width="2" height="2"/><rect x="43.200" y="12.800" width="2" height="2"/><rect x="50.200" y="12.800" width="2" height="2"/></g><path d="M58 8L63.500 13M63.500 8L58 13M58 8H63.500M58 13H63.500" stroke="#555" stroke-width=".8" fill="none"/><g fill="#333"><rect x="56.800" y="6.600" width="2.200" height="2.200"/><rect x="62.600" y="6.600" width="2.200" height="2.200"/><rect x="56.800" y="12" width="2.200" height="2.200"/><rect x="62.600" y="12" width="2.200" height="2.200"/><circle cx="60.800" cy="10.500" r="1.300"/></g><rect x="70.200" y="7.200" width="6.800" height="6.400" fill="#fafafa" stroke="#666" stroke-width=".9"/><path d="M71 14.400H77.800V8" stroke="#999" stroke-width=".8" fill="none"/><path d="M82 2.500V19" stroke="#b0b0b0" stroke-width=".8"/><path d="M82.800 2.500V19" stroke="#f2f2f2" stroke-width=".8"/><g transform="translate(87,5)"><path d="M1 11L2 6.500L7 1.500L10.500 4.500L5.500 9.800Z" fill="#f0f0f0" stroke="#333" stroke-width=".9" stroke-linejoin="round"/><path d="M1 11L5 6.800" stroke="#333" stroke-width=".7"/><path d="M7.600 1L11 4" stroke="#222" stroke-width="1.600"/></g><g transform="translate(101.500,5)"><path d="M1 11L2 6.500L7 1.500L10.500 4.500L5.500 9.800Z" fill="#f0f0f0" stroke="#333" stroke-width=".9" stroke-linejoin="round"/><path d="M1 11L5 6.800" stroke="#333" stroke-width=".7"/><path d="M7.600 1L11 4" stroke="#222" stroke-width="1.600"/><path d="M8 11C10 8 12 12 13.500 7" stroke="#333" stroke-width=".8" fill="none"/></g><rect x="115.700" y="4.200" width="15" height="12.400" fill="#a9d1f0" stroke="#7fb2dc" stroke-width=".7"/><rect x="119" y="7" width="8.600" height="7" fill="#8ea4b6" stroke="#3c4854" stroke-width=".9"/><rect x="134.200" y="7" width="8.800" height="6.800" rx="1.600" fill="url(#go)" stroke="#555" stroke-width=".9"/><ellipse cx="153.500" cy="10.500" rx="5.400" ry="3.700" fill="url(#go)" stroke="#555" stroke-width=".9"/><path d="M164.400 10.500L166.800 6.600H171.800L174.200 10.500L171.800 14.400H166.800Z" fill="url(#go)" stroke="#555" stroke-width=".9" stroke-linejoin="round"/><path d="M180 13.800L188 6.400" stroke="#444" stroke-width="1"/><g transform="translate(191.300,-58.500) scale(.66)"><path d="M14.00 97.30C15.10 97.63 14.77 97.30 15.30 98.60C15.83 99.90 14.53 100.67 15.60 101.20C16.67 101.73 16.83 100.33 18.50 100.20C20.17 100.07 20.23 99.67 20.60 100.80C20.97 101.93 21.07 102.27 19.60 103.60C18.13 104.93 17.13 103.50 16.20 104.80C15.27 106.10 16.57 105.77 16.80 107.50C17.03 109.23 17.63 108.70 16.90 110.00C16.17 111.30 16.03 111.53 14.60 111.40C13.17 111.27 13.60 110.80 12.60 109.60C11.60 108.40 12.80 108.00 11.60 107.80C10.40 107.60 10.80 107.87 9.00 109.00C7.20 110.13 7.90 111.00 6.20 111.20C4.50 111.40 4.43 111.00 3.90 109.60C3.37 108.20 3.43 108.47 4.60 107.00C5.77 105.53 7.07 106.20 7.40 105.20C7.73 104.20 6.60 104.87 5.60 104.00C4.60 103.13 4.47 103.73 4.40 102.60C4.33 101.47 4.33 101.37 5.40 100.60C6.47 99.83 5.87 99.97 7.60 100.30C9.33 100.63 9.33 102.03 10.60 101.60C11.87 101.17 10.93 100.33 11.40 99.00C11.87 97.67 11.13 98.17 12.00 97.60C12.87 97.03 12.90 96.97 14.00 97.30Z" fill="url(#go)" stroke="#444" stroke-width="1.300" stroke-linejoin="round"/></g><path d="M209.800 9.200H214.200L212 11.800Z" fill="#222"/><path d="M222 2.500V19M224.200 2.500V19" stroke="#aaa" stroke-width=".8"/><path d="M222.800 2.500V19M225 2.500V19" stroke="#f2f2f2" stroke-width=".8"/><rect x="226.500" y="4.400" width="13" height="12" fill="#a9d1f0" stroke="#7fb2dc" stroke-width=".7"/><rect x="230.500" y="7.500" width="6" height="6" fill="#f8f8f8" stroke="#777" stroke-width=".8"/><rect x="242" y="6.500" width="5.500" height="5.500" fill="#e8e8e8" stroke="#aaa" stroke-width=".8"/><rect x="244.5" y="9" width="5.500" height="5.500" fill="#f0f0f0" stroke="#aaa" stroke-width=".8"/><rect x="254" y="6.500" width="5.500" height="5.500" fill="#e8e8e8" stroke="#aaa" stroke-width=".8"/><rect x="256.5" y="9" width="5.500" height="5.500" fill="#f0f0f0" stroke="#aaa" stroke-width=".8"/><rect x="267" y="6.500" width="5.500" height="5.500" fill="#e8e8e8" stroke="#aaa" stroke-width=".8"/><rect x="269.5" y="9" width="5.500" height="5.500" fill="#f0f0f0" stroke="#aaa" stroke-width=".8"/><rect x="279" y="6.500" width="5.500" height="5.500" fill="#e8e8e8" stroke="#aaa" stroke-width=".8"/><rect x="281.5" y="9" width="5.500" height="5.500" fill="#f0f0f0" stroke="#aaa" stroke-width=".8"/><path d="M292 2.500V19" stroke="#b0b0b0" stroke-width=".8"/><path d="M292.800 2.500V19" stroke="#f2f2f2" stroke-width=".8"/><g fill="none" stroke="#555" stroke-width="1.100"><rect x="297.800" y="5.200" width="4.400" height="4.600" rx="2"/><rect x="297.800" y="11.200" width="4.400" height="4.600" rx="2"/><path d="M300 8V13"/></g><rect x="329.200" y="4.800" width="11.400" height="11.600" fill="#fff" stroke="#333" stroke-width=".9"/><path d="M328.500 3.800L341.600 17.200" stroke="#e8141c" stroke-width="1.400"/><path d="M343.800 9.400H347.800L345.800 11.800Z" fill="#222"/><rect x="374" y="5.700" width="15.500" height="10" fill="#00467c"/><path d="M648 2V19" stroke="#b4b4b4" stroke-width=".8"/><path d="M648.800 2V19" stroke="#f4f4f4" stroke-width=".8"/></svg>
<div class="t" style="left:316.3px;top:35.13px;font-size:6.8px;line-height:7.82px;color:#222;white-space:nowrap;font-weight:bold;transform:scaleX(0.8641);transform-origin:0 0;">Style:</div>
<div class="t" style="left:361.2px;top:35.13px;font-size:6.8px;line-height:7.82px;color:#222;white-space:nowrap;font-weight:bold;transform:scaleX(0.8742);transform-origin:0 0;">Color:</div>
<svg style="position:absolute;left:0px;top:0px;" width="60" height="300" viewBox="0 0 60 300"><defs><linearGradient id="gt" x1="0" y1="0" x2="0" y2="1"><stop offset="0" stop-color="#9fb4c6"/><stop offset="1" stop-color="#6f8597"/></linearGradient></defs><rect x="14.300" y="68.300" width="9.600" height="8.200" fill="none" stroke="#333" stroke-width="1" stroke-dasharray="2 1.200"/><path d="M26.2 79V76.8L24.0 79Z" fill="#222"/><path d="M30.300 68.800L35 72L30.300 75.200Z" fill="#333"/><path d="M35.500 73.500H41M38.200 70.800V76.200" stroke="#333" stroke-width="1.200"/><ellipse cx="19.300" cy="86" rx="5.200" ry="3.100" fill="none" stroke="#333" stroke-width="1.100" transform="rotate(-12 19.300 86)"/><path d="M15 88.500C14.500 90 16 90.500 15.800 92" stroke="#333" stroke-width=".9" fill="none"/><path d="M26.2 93.5V91.3L24.0 93.5Z" fill="#222"/><ellipse cx="34.500" cy="87.500" rx="4" ry="3.600" fill="none" stroke="#444" stroke-width=".8" stroke-dasharray="1.200 .8"/><path d="M33 89.500C35 90 37 88.500 41.500 83.500" stroke="#333" stroke-width="1.500" fill="none"/><path d="M31.500 88.800C32.500 90.500 35 90.500 36.500 88.500Z" fill="#222"/><path d="M43.2 93.5V91.3L41.0 93.5Z" fill="#222"/><path d="M16.800 96.800V103.200H24.200M14 99.200H21.600V105.600" stroke="#333" stroke-width="1.400" fill="none"/><path d="M22.500 97.500L16 104" stroke="#555" stroke-width=".7"/><path d="M26.2 107.5V105.3L24.0 107.5Z" fill="#222"/><path d="M31.500 105L32 102.800L37.200 97.600L39 99.400L33.800 104.600Z" fill="#e8e8e8" stroke="#333" stroke-width=".8"/><path d="M36.500 98.200L40 96.200L41 97.200L39.400 100.800Z" fill="#222" stroke="#222" stroke-width="1"/><path d="M43.2 107.5V105.3L41.0 107.5Z" fill="#222"/><g transform="rotate(-35 19 118.500)"><rect x="12.600" y="115.800" width="13" height="5.600" rx="2.600" fill="#bdbdbd" stroke="#444" stroke-width=".8"/><rect x="17" y="115.800" width="4.200" height="5.600" fill="#8a8a8a"/></g><path d="M13 114.500A4 4 0 0 1 18.500 113.500L14.500 119Z" fill="#f4f4f4"/><path d="M26.2 125.5V123.3L24.0 125.5Z" fill="#222"/><path d="M41.500 113.500L35.500 119" stroke="#444" stroke-width="1.600"/><path d="M30.500 122.500C32 119.500 35 118.500 37 119.500C36.500 121.800 33.500 123 30.500 122.500Z" fill="#222"/><path d="M43.2 125.5V123.3L41.0 125.5Z" fill="#222"/><g transform="translate(0,1.4)"><path d="M17.500 127.500H20.500V131.500H24V134.500H14V131.500H17.500Z" fill="#444"/><circle cx="19" cy="128.200" r="1.900" fill="#444"/><path d="M13.500 136.500H24.500" stroke="#333" stroke-width="1.500"/></g><path d="M26.2 140.5V138.3L24.0 140.5Z" fill="#222"/><path d="M41.500 127.500L36.500 133" stroke="#444" stroke-width="1.400"/><path d="M31 136C32.500 133.500 35.500 132.500 37.500 133.500C37 135.500 34 136.500 31 136Z" fill="#222"/><path d="M31 131C32 128.500 35 128 36.500 129.500" stroke="#333" stroke-width=".9" fill="none"/><path d="M36 127.800L37.200 130.500L34.500 130.200Z" fill="#333"/><path d="M43.2 139.5V137.3L41.0 139.5Z" fill="#222"/><path d="M14 150.500L19.500 144.500H26L20.500 150.500Z" fill="#777" stroke="#444" stroke-width=".7"/><path d="M14 150.500H20.500L26 144.500V147L20.500 153H14Z" fill="#4a4a4a"/><path d="M26.2 154.5V152.3L24.0 154.5Z" fill="#222"/><path d="M31 148.500L36 143.500L41 148L36.500 153Z" fill="#777" stroke="#333" stroke-width=".9"/><path d="M34.500 145V141.500C34.500 140 37 140 37 141.500V144.500" stroke="#333" stroke-width=".9" fill="none"/><path d="M40.500 148C42.500 149.500 42.500 152 41.800 153C40.500 152 40.200 150 40.500 148Z" fill="#222"/><path d="M43.2 154.5V152.3L41.0 154.5Z" fill="#222"/><g transform="translate(0,1.2)"><circle cx="20.500" cy="160.500" r="3.800" fill="#f0f0f0" stroke="#555" stroke-width=".9"/><path d="M18.500 163.500L14.500 168.500" stroke="#444" stroke-width="1.700"/></g><path d="M26.2 169.5V167.3L24.0 169.5Z" fill="#222"/><g transform="translate(0,1.2)"><ellipse cx="36" cy="162.500" rx="5.400" ry="3.800" fill="#9a9a9a" stroke="#555" stroke-width=".9"/><path d="M31.500 164C33 166.500 39 166.500 41 164" stroke="#555" stroke-width=".9" fill="none"/></g><path d="M43.2 169.5V167.3L41.0 169.5Z" fill="#222"/><path d="M14.500 186L15.500 181L20.500 176.500L24 179.500L19.500 184.800Z" fill="#f4f4f4" stroke="#333" stroke-width=".9" stroke-linejoin="round"/><path d="M14.500 186L18.800 181.600" stroke="#333" stroke-width=".7"/><path d="M21 176L24.600 179" stroke="#222" stroke-width="1.700"/><circle cx="19" cy="181.400" r=".8" fill="#333"/><path d="M26.2 187.5V185.3L24.0 187.5Z" fill="#222"/><path d="M31.800 176.600H39.600V178.600H38.800C38.500 177.700 38 177.500 36.500 177.500V183C36.500 183.600 36.900 183.700 37.700 183.700V184.300H33.700V183.700C34.500 183.700 34.900 183.600 34.900 183V177.500C33.400 177.500 32.900 177.700 32.600 178.600H31.800Z" fill="#2a2a2a"/><path d="M43.2 187.5V185.3L41.0 187.5Z" fill="#222"/><path d="M16 190V199L18.200 197L19.800 200.200L21 199.600L19.500 196.500L22.200 196.200Z" fill="#222"/><path d="M26.2 202V199.8L24.0 202Z" fill="#222"/><rect x="27.500" y="188" width="15.500" height="14.600" fill="#a9cfee" stroke="#84b4dc" stroke-width=".7"/><rect x="31.400" y="191.800" width="9.800" height="7.600" fill="url(#gt)" stroke="#3a4a58" stroke-width=".9"/><circle cx="19.500" cy="210" r="2.600" fill="#e8e8e8" stroke="#555" stroke-width=".8"/><ellipse cx="19" cy="212.500" rx="5.600" ry="2.600" fill="none" stroke="#333" stroke-width="1" transform="rotate(18 19 212.500)"/><path d="M13 213.500L14.800 210.800L15.800 213.800Z" fill="#222"/><path d="M26.2 218.5V216.3L24.0 218.5Z" fill="#222"/><ellipse cx="35.500" cy="212.500" rx="5.800" ry="2.800" fill="none" stroke="#333" stroke-width="1.100" transform="rotate(12 35.500 212.500)"/><path d="M37.500 208.200H42" stroke="#222" stroke-width="1.600"/><path d="M31.500 214.500L34 213.500L33.500 216.200Z" fill="#222"/><path d="M43.2 218.5V216.3L41.0 218.5Z" fill="#222"/><path d="M16 232C14.500 229.500 13.500 227.500 13.800 226.500C14.500 225.500 15.800 226.800 16.500 227.800V222.800C16.500 221.800 17.900 221.800 17.900 222.800V221.800C17.900 220.800 19.400 220.800 19.400 221.800V222.400C19.400 221.500 20.900 221.500 20.900 222.400V223.500C20.900 222.700 22.300 222.700 22.300 223.500V228.500C22.300 230 21.800 231 21.500 232Z" fill="#f6f6f6" stroke="#333" stroke-width=".8" stroke-linejoin="round"/><path d="M26.2 234V231.8L24.0 234Z" fill="#222"/><circle cx="35" cy="226" r="3.300" fill="#ededed" stroke="#333" stroke-width="1"/><path d="M37.400 228.600L41 232.400" stroke="#333" stroke-width="1.600"/><rect x="21.200" y="246.500" width="18" height="17.400" fill="#fff" stroke="#d0d0d0" stroke-width=".6"/><rect x="14.300" y="239.200" width="15.700" height="15.300" fill="#00437a" stroke="#f2f2f2" stroke-width="1.300"/><path d="M34.500 239.800C36.500 239.800 37.800 241 37.800 242.500" stroke="#2a2a2a" stroke-width="1.100" fill="none"/><path d="M32.800 239.800L35.200 238V241.600ZM37.800 244.300L36 241.900H39.600Z" fill="#2a2a2a"/><rect x="14.800" y="261" width="3.600" height="3.600" fill="#fff" stroke="#333" stroke-width=".6"/><rect x="13" y="259.200" width="3.800" height="3.800" fill="#111"/><rect x="21.200" y="272.200" width="13.800" height="9.200" fill="#f6f6f6" stroke="#444" stroke-width=".9"/><circle cx="28.100" cy="276.800" r="3" fill="#fff" stroke="#333" stroke-width=".8"/></svg>
<div style="left:33.6px;top:401.2px;width:15.6px;height:15.4px;background:#ffffff;border-radius:3px;"></div>
<svg style="position:absolute;left:33.6px;top:401.2px;" width="15.6" height="15.4" viewBox="0 0 15.6 15.4"><path d="M3.900 4.300H11.300V6.700H8.900V12.700H6.300V6.700H3.900Z" fill="#5c5c5c"/></svg>
<div class="t" style="left:52.6px;top:401.28px;font-size:13.8px;line-height:15.87px;color:#ffffff;white-space:nowrap;font-weight:bold;transform:scaleX(0.9749);transform-origin:0 0;-webkit-text-stroke:0.25px #fff;">TEMPLATE</div>
<div class="t" style="left:123.6px;top:401.28px;font-size:13.8px;line-height:15.87px;color:#ffffff;white-space:nowrap;transform:scaleX(0.9385);transform-origin:0 0;-webkit-text-stroke:0.15px #fff;">.NET</div>
</div></body></html>
